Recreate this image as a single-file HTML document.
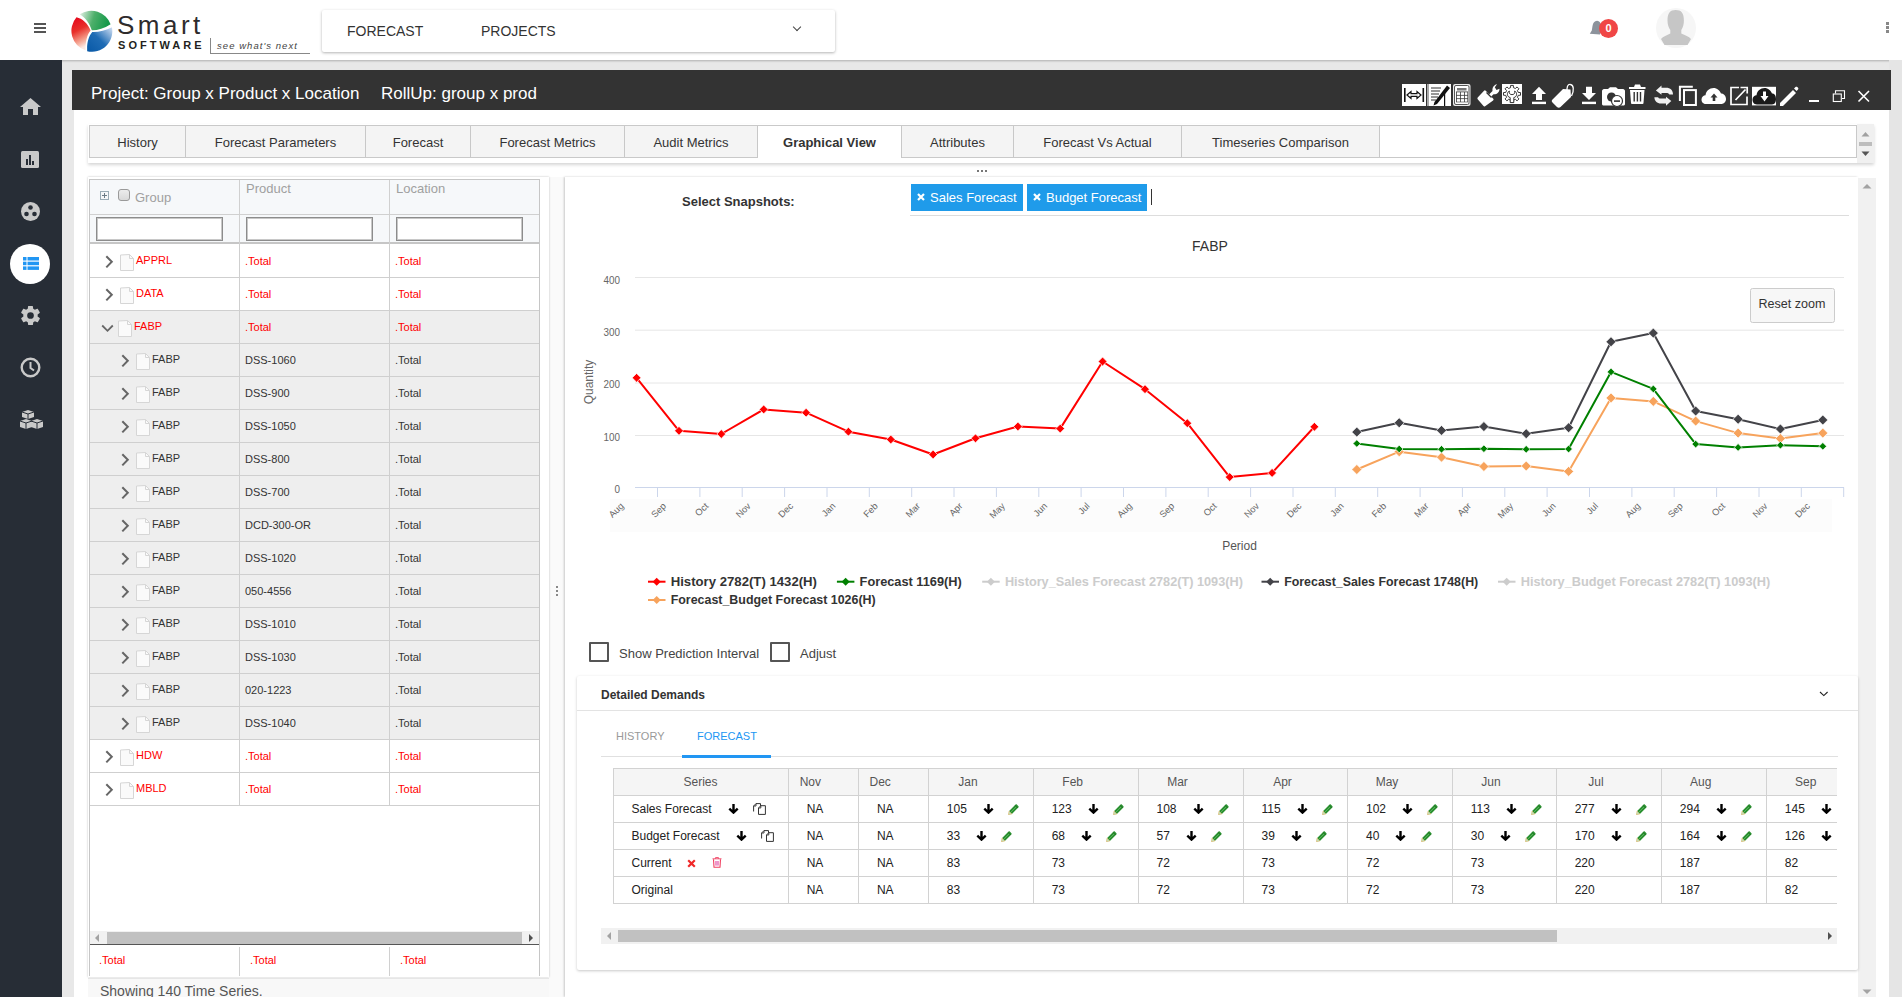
<!DOCTYPE html>
<html><head><meta charset="utf-8">
<style>
*{box-sizing:border-box;margin:0;padding:0}
html,body{width:1902px;height:997px;overflow:hidden}
body{font-family:"Liberation Sans",sans-serif;background:#e8e8e8;position:relative;color:#333}
.a{position:absolute}
#hdr{left:0;top:0;width:1902px;height:60px;background:#fff;box-shadow:0 1px 2px rgba(0,0,0,.25)}
#side{left:0;top:60px;width:62px;height:937px;background:#272d36}
#title{left:72px;top:70px;width:1819px;height:40px;background:#333}
#title span{position:absolute;top:14px;font-size:17px;color:#fff;white-space:nowrap}
#panel{left:74px;top:110px;width:1815px;height:887px;background:#fff}
#rstrip{left:1889px;top:60px;width:13px;height:937px;background:#e5e5e5}
.tabs{left:89px;top:125px;width:1768px;height:33px;border:1px solid #c9c9c9;background:#fff}
.tab{position:absolute;top:0;height:31px;background:#f4f4f4;border-right:1px solid #c8c8c8;font-size:13px;color:#333;text-align:center;line-height:33px}
.tab.act{background:#fff;font-weight:bold;height:32px}
.grid{left:89px;top:179px;width:451px;height:796px;border-left:1px solid #ccc;border-top:1px solid #ddd}
.gc{position:absolute;border-right:1px solid #ccc}
.row{position:absolute;left:0;width:450px;height:33px;border-bottom:1px solid #ccc}
.row.g{background:#eee}
.row div{position:absolute;top:0;height:32px;font-size:11px;line-height:33px;white-space:nowrap}
.red{color:#f00}
.tx{color:#333}
.chev{position:absolute;top:11px;width:8px;height:8px;border-right:2px solid #555;border-bottom:2px solid #555;transform:rotate(-45deg)}
.chev.dn{transform:rotate(45deg)}
.file{position:absolute;top:9px;width:13px;height:16px}
.sicon{position:absolute;left:19px;width:24px;height:24px}
</style></head><body>
<!-- header -->
<div id="hdr" class="a">
  <div class="a" style="left:34px;top:23px;width:12px;height:2px;background:#555"></div>
  <div class="a" style="left:34px;top:27px;width:12px;height:2px;background:#555"></div>
  <div class="a" style="left:34px;top:31px;width:12px;height:2px;background:#555"></div>
  <svg class="a" style="left:66px;top:6px" width="52" height="50" viewBox="0 0 52 50">
    <defs>
      <linearGradient id="lr" x1="0" y1="0" x2=".3" y2="1"><stop offset="0" stop-color="#e6001a"/><stop offset=".45" stop-color="#e8302a"/><stop offset=".8" stop-color="#f5a592"/><stop offset="1" stop-color="#fde8e2"/></linearGradient>
      <linearGradient id="lg" x1="0" y1="0" x2="1" y2=".2"><stop offset="0" stop-color="#e6f2e8"/><stop offset=".5" stop-color="#4daf6a"/><stop offset="1" stop-color="#14994a"/></linearGradient>
      <linearGradient id="lb" x1="0" y1="1" x2="1" y2="0"><stop offset="0" stop-color="#0858a6"/><stop offset=".5" stop-color="#1f6cb5"/><stop offset="1" stop-color="#d6e2f4"/></linearGradient>
    </defs>
    <path d="M10.5 11.3 C16 12.5 22 17.5 24.6 24.6 C21 28.5 19.5 36 19.5 44.3 A20.5 20.5 0 0 1 10.5 11.3Z" fill="url(#lr)"/>
    <path d="M13.8 8.3 A20.5 20.5 0 0 1 44.6 18.3 C38 22.5 31 24.5 25.8 24.3 C23.5 17.5 19.5 11.8 13.8 8.3Z" fill="url(#lg)"/>
    <path d="M26.3 26 C32 26.3 40 24.5 45.9 21.2 A20.5 20.5 0 0 1 21.2 45.3 C20.8 38 22 31 26.3 26Z" fill="url(#lb)"/>
  </svg>
  <div class="a" style="left:117px;top:10px;font-size:26px;letter-spacing:3.5px;color:#2e2b2c">Smart</div>
  <div class="a" style="left:118px;top:39px;font-size:11px;font-weight:bold;letter-spacing:3.05px;color:#231f20">SOFTWARE</div>
  <div class="a" style="left:210px;top:38px;width:100px;height:16px;border-left:1px solid #888;border-bottom:1px solid #888"></div>
  <div class="a" style="left:217px;top:40px;font-size:9.5px;font-style:italic;letter-spacing:1.05px;color:#444">see what's next</div>
  <div class="a" style="left:322px;top:10px;width:513px;height:42px;background:#fff;box-shadow:0 1px 3px rgba(0,0,0,.3);border-radius:2px">
    <div class="a" style="left:25px;top:13px;font-size:14px;color:#333">FORECAST</div>
    <div class="a" style="left:159px;top:13px;font-size:14px;color:#333">PROJECTS</div>
    <div class="a" style="left:472px;top:14px;width:6px;height:6px;border-right:1.5px solid #444;border-bottom:1.5px solid #444;transform:rotate(45deg)"></div>
  </div>
  <!-- bell -->
  <svg class="a" style="left:1589px;top:20px" width="14" height="16" viewBox="0 0 14 16"><path d="M8 0.8 C5.5 0.8 4 3 3.5 6 L2.8 10.5 L0.8 13.8 L11 14.5 L13 9 C13 5 11 0.8 8 0.8Z" fill="#8c939c"/></svg>
  <div class="a" style="left:1599px;top:19px;width:19px;height:19px;border-radius:50%;background:#f04646;color:#fff;font-size:11px;font-weight:bold;text-align:center;line-height:19px">0</div>
  <!-- avatar -->
  <svg class="a" style="left:1656px;top:8px" width="40" height="41" viewBox="0 0 40 41"><circle cx="20" cy="20" r="20" fill="#f6f6f6"/><path d="M11.5 12.5 C11.5 5 14 2 19.7 2 C25.4 2 27.9 5 27.9 12.5 C27.9 16.5 27 19.5 25.3 22 L25.3 25.5 C29 27 33 28.5 35 31 L31.5 37 L8.5 37 L5 31 C7 28.5 11 27 14.3 25.5 L14.3 22 C12.5 19.5 11.5 16.5 11.5 12.5Z" fill="#c6c6c6"/></svg>
  <div class="a" style="left:1886px;top:22px;width:3px;height:3px;background:#888"></div>
  <div class="a" style="left:1886px;top:26px;width:3px;height:3px;background:#888"></div>
  <div class="a" style="left:1886px;top:30px;width:3px;height:3px;background:#888"></div>
</div>

<!-- sidebar -->
<div id="side" class="a">
  <svg class="a" style="left:20px;top:38px" width="21" height="17" viewBox="0 0 21 17"><path d="M10.5 0 L21 9 L18 9 L18 17 L13 17 L13 11 L8 11 L8 17 L3 17 L3 9 L0 9Z" fill="#c9c9c9"/></svg>
  <svg class="a" style="left:21px;top:91px" width="18" height="17" viewBox="0 0 18 17"><rect x="0" y="0" width="18" height="17" rx="1.5" fill="#c9c9c9"/><rect x="5" y="8" width="2" height="6" fill="#272d36"/><rect x="8" y="4" width="2" height="10" fill="#272d36"/><rect x="11" y="10" width="2" height="4" fill="#272d36"/></svg>
  <svg class="a" style="left:21px;top:142px" width="19" height="19" viewBox="0 0 19 19"><circle cx="9.5" cy="9.5" r="9.5" fill="#c9c9c9"/><circle cx="9.5" cy="5.5" r="2.3" fill="#272d36"/><circle cx="5.5" cy="12" r="2.3" fill="#272d36"/><circle cx="13.5" cy="12" r="2.3" fill="#272d36"/></svg>
  <div class="a" style="left:10px;top:184px;width:40px;height:40px;border-radius:50%;background:#fff"></div>
  <svg class="a" style="left:23px;top:197px" width="16" height="13" viewBox="0 0 16 13"><rect x="0" y="0" width="3.5" height="3.5" fill="#2196f3"/><rect x="4.5" y="0" width="11.5" height="3.5" fill="#2196f3"/><rect x="0" y="4.7" width="3.5" height="3.5" fill="#2196f3"/><rect x="4.5" y="4.7" width="11.5" height="3.5" fill="#2196f3"/><rect x="0" y="9.4" width="3.5" height="3.5" fill="#2196f3"/><rect x="4.5" y="9.4" width="11.5" height="3.5" fill="#2196f3"/></svg>
  <svg class="a" style="left:19px;top:244px" width="23" height="23" viewBox="0 0 24 24"><path fill="#c9c9c9" d="M19.4 13c.04-.32.1-.66.1-1s-.03-.68-.07-1l2.1-1.65c.2-.15.24-.42.12-.64l-2-3.46c-.12-.22-.39-.3-.61-.22l-2.5 1c-.52-.4-1.08-.73-1.7-.98l-.37-2.65A.49.49 0 0 0 14 2h-4c-.25 0-.46.18-.5.42l-.37 2.65c-.62.25-1.18.58-1.7.98l-2.5-1c-.22-.08-.49 0-.61.22l-2 3.46c-.13.22-.07.49.12.64L4.57 11c-.04.32-.07.66-.07 1s.03.68.07 1l-2.1 1.65c-.2.15-.25.42-.12.64l2 3.46c.12.22.39.3.61.22l2.5-1c.52.4 1.08.73 1.7.98l.37 2.65c.04.24.25.42.5.42h4c.25 0 .46-.18.5-.42l.37-2.65c.62-.25 1.18-.58 1.7-.98l2.5 1c.22.08.49 0 .61-.22l2-3.46c.12-.22.07-.49-.12-.64L19.4 13zM12 15.5A3.5 3.5 0 1 1 12 8.5a3.5 3.5 0 0 1 0 7z"/></svg>
  <svg class="a" style="left:20px;top:297px" width="21" height="21" viewBox="0 0 21 21"><circle cx="10.5" cy="10.5" r="8.8" fill="none" stroke="#c9c9c9" stroke-width="2.4"/><path d="M10.5 5 L10.5 11 L14 13.5" fill="none" stroke="#c9c9c9" stroke-width="2"/></svg>
  <svg class="a" style="left:20px;top:350px" width="25" height="19" viewBox="0 0 25 19"><g fill="#c9c9c9"><path d="M8 0 L14 2 L14 7 L8 9 L2 7 L2 2Z"/><path d="M6 9 L12 11 L12 17 L6 19 L0 17 L0 11Z"/><path d="M17 9 L23 11 L23 17 L17 19 L11 17 L11 11Z"/></g><g stroke="#272d36" stroke-width="1" fill="none"><path d="M2 2 L8 4 L14 2 M8 4 L8 9"/><path d="M0 11 L6 13 L12 11 M6 13 L6 19"/><path d="M11 11 L17 13 L23 11 M17 13 L17 19"/></g></svg>
</div>

<div id="rstrip" class="a"></div>
<div id="title" class="a"><span style="left:19px">Project: Group x Product x Location</span><span style="left:309px">RollUp: group x prod</span><svg class="a" style="left:1326px;top:10px" width="480" height="30" viewBox="0 0 480 30">
 <rect x="4" y="4" width="24" height="22" fill="#fff"/>
 <rect x="6" y="8" width="1.6" height="14" fill="#111"/><rect x="24.5" y="8" width="1.6" height="14" fill="#111"/>
 <path d="M9 15 L13 11.5 L13 13.6 L19 13.6 L19 11.5 L23 15 L19 18.5 L19 16.4 L13 16.4 L13 18.5Z" fill="#fff" stroke="#111" stroke-width="1.2"/>
 <rect x="29" y="4" width="24" height="22" fill="#fff"/>
 <rect x="29.5" y="4" width="1" height="22" fill="#555"/>
 <g fill="#333"><rect x="33" y="7.5" width="10" height="1"/><rect x="33" y="10.5" width="9" height="1"/><rect x="33" y="13.5" width="8" height="1"/><rect x="33" y="16.5" width="7" height="1"/><rect x="33" y="19.5" width="5" height="1"/></g>
 <path d="M49 5.5 L52 8 L39 24 L35.5 25.5 L36.5 22Z" fill="#111"/>
 <rect x="46" y="12" width="1.2" height="14" fill="#111"/>
 <rect x="55" y="4" width="17.5" height="22" rx="2" fill="#eaeaea"/>
 <rect x="56.5" y="5.5" width="14.5" height="19" rx="1.5" fill="#fff" stroke="#555" stroke-width="1"/>
 <rect x="59" y="8" width="9.5" height="2.5" fill="#777"/>
 <rect x="58" y="11.5" width="12" height="10.8" fill="#3a3a3a"/><g fill="#fff"><rect x="58.8" y="12.3" width="3.2" height="2.6"/><rect x="62.8" y="12.3" width="3.2" height="2.6"/><rect x="66.8" y="12.3" width="2.6" height="2.6"/><rect x="58.8" y="15.7" width="3.2" height="2.6"/><rect x="62.8" y="15.7" width="3.2" height="2.6"/><rect x="66.8" y="15.7" width="2.6" height="2.6"/><rect x="58.8" y="19.1" width="3.2" height="2.6"/><rect x="62.8" y="19.1" width="3.2" height="2.6"/><rect x="66.8" y="19.1" width="2.6" height="2.6"/></g>
 <path d="M80.6 18.4 L86.9 11.6 L94.4 19.5 L86.4 25.3Z" fill="#fff" stroke="#fff" stroke-width="2.4" stroke-linejoin="round"/><path d="M91 14.5 L94.5 11 C94 8 95.5 5 99 4.3 L96.8 7.3 L98.5 10 L101.5 8.8 C101.5 12.5 99 14.5 95.5 14.3 L92.5 17.2Z" fill="#fff"/><path d="M88.5 12.5 L93.5 17.5" stroke="#333" stroke-width="1.3"/>
 <rect x="104" y="4" width="20" height="20" fill="#fff"/>
 <path d="M112.56 7.66 L112.65 5.41 L115.35 5.41 L115.44 7.66 L117.39 8.47 L119.05 6.94 L120.96 8.85 L119.43 10.51 L120.24 12.46 L122.49 12.55 L122.49 15.25 L120.24 15.34 L119.43 17.29 L120.96 18.95 L119.05 20.86 L117.39 19.33 L115.44 20.14 L115.35 22.39 L112.65 22.39 L112.56 20.14 L110.61 19.33 L108.95 20.86 L107.04 18.95 L108.57 17.29 L107.76 15.34 L105.51 15.25 L105.51 12.55 L107.76 12.46 L108.57 10.51 L107.04 8.85 L108.95 6.94 L110.61 8.47Z" fill="none" stroke="#222" stroke-width="0.9" stroke-linejoin="round"/><path d="M111.3 11 L111.3 12.6 C111.3 13.8 112.4 14.6 114 14.6 C115.6 14.6 116.7 13.8 116.7 12.6 L116.7 11 C118 11.7 118.6 13 118.6 14.3 C118.6 16 117.4 17.2 115.8 17.6 L115.8 22.6 L112.2 22.6 L112.2 17.6 C110.6 17.2 109.4 16 109.4 14.3 C109.4 13 110 11.7 111.3 11Z" fill="#fff" stroke="#222" stroke-width="0.9" stroke-linejoin="round"/>
 <path d="M134 14 L141 6.8 L148 14 L144 14 L144 20 L138 20 L138 14Z" fill="#fff"/><rect x="134" y="21.7" width="14" height="2.4" fill="#fff"/>
 <path d="M154.5 19.5 L165 9 L172.5 9.5 L173 17 L162.5 27 C161.5 28 160 28 159 27 L154.5 22.5 C153.5 21.5 153.5 20.5 154.5 19.5Z" fill="#fff"/>
 <path d="M169.5 12.5 C168 7 170 4 172.5 4.5 C175.5 5 176.5 10 173.5 16" fill="none" stroke="#fff" stroke-width="1.3"/>
 <path d="M184 13 L188 13 L188 6.8 L194 6.8 L194 13 L198 13 L191 20Z" fill="#fff"/><rect x="184" y="21.7" width="14" height="2.4" fill="#fff"/>
 <path d="M204 11 C204 10 205 9 206 9 L210 9 L212 7.2 L218 7.2 L220 9 L225 9 C226 9 227 10 227 11 L227 24 C227 25 226 25.5 225 25.5 L206 25.5 C205 25.5 204 25 204 24Z" fill="#fff"/>
 <circle cx="213.5" cy="17" r="4.5" fill="#333"/>
 <circle cx="219" cy="21" r="5.5" fill="#fff" stroke="#333" stroke-width="1.2"/><rect x="216" y="20.3" width="6" height="1.6" fill="#333"/>
 <path d="M231 7 L236 7 L237 4.5 L242 4.5 L243 7 L247.5 7 L247.5 9 L231 9Z" fill="#fff"/>
 <path d="M232 10 L246.5 10 L245.5 23 C245.5 23.8 245 24 244 24 L234.5 24 C233.5 24 233 23.8 233 23Z" fill="#fff"/>
 <g fill="#333"><rect x="235.5" y="12" width="1.4" height="9.5"/><rect x="238.7" y="12" width="1.4" height="9.5"/><rect x="241.8" y="12" width="1.4" height="9.5"/></g>
 <path d="M257.9 10.5 L263.5 5.6 L263.5 7.8 L268 7.8 C272.5 7.8 275 10.5 275 14.6 L271.3 14.6 C271.3 13.5 270 13 268 13 L263.5 13 L263.5 14.8Z" fill="#f2f2f2"/>
 <path d="M273.3 21.1 L268 16.8 L268 18.6 L263 18.6 C261.2 18.6 260.2 17.9 260.2 17.3 L256.4 17.3 C256.4 21 259 23.6 263 23.6 L268 23.6 L268 25.8Z" fill="#f0f0f0"/>
 <path d="M281.9 21 L281.9 6.8 L294.8 6.8" fill="none" stroke="#fff" stroke-width="2"/>
 <rect x="286" y="10.1" width="11.9" height="14.9" fill="none" stroke="#fff" stroke-width="2"/>
 <path d="M308 24 C304.5 24 303.5 21.5 303.5 19.5 C303.5 17 305.5 15.3 307.5 15.2 C308 11 311.5 8 315.5 8 C319 8 322 10.5 323 13.5 C326 13.5 328 16 328 19 C328 21.7 326 24 323 24Z" fill="#fff"/>
 <path d="M312.5 17.5 L316 13.5 L319.5 17.5 L317.3 17.5 L317.3 21 L314.7 21 L314.7 17.5Z" fill="#333"/>
 <path d="M341 7.5 L333 7.5 L333 24.5 L349 24.5 L349 16.5" fill="none" stroke="#fff" stroke-width="1.7"/>
 <path d="M337.5 20 L347.5 9.5 M342.5 7.5 L349.2 7.5 L349.2 13.5" fill="none" stroke="#fff" stroke-width="1.7"/>
 <rect x="354" y="6.8" width="24" height="18.6" fill="#fff"/>
 <path d="M359 24.5 C355.5 24.5 354.5 21.5 354.5 19.5 C354.5 17 356.5 15.3 358.5 15.2 C359 11 362.5 8 366.5 8 C370 8 373 10.5 374 13.5 C377 13.5 378 16 378 19 C378 21.7 377 24.5 374 24.5Z" fill="#1a1a1a"/>
 <path d="M362.5 16 L365 16 L365 11.5 L368 11.5 L368 16 L370.5 16 L366.5 21.5Z" fill="#fff"/>
 <path d="M382 23 L395 10 L398 13 L385 26 L382 26Z" fill="#fff"/><path d="M396 8.5 L397.5 7 C398 6.5 398.8 6.5 399.3 7 L400 7.8 C400.5 8.3 400.5 9 400 9.5 L398.6 11Z" fill="#fff"/>
 <rect x="411" y="20" width="10" height="2" fill="#fff"/>
 <rect x="435.3" y="14" width="8" height="7.5" fill="none" stroke="#fff" stroke-width="1.1"/>
 <path d="M437.5 13.5 L437.5 10.8 L446.5 10.8 L446.5 18.5 L444 18.5" fill="none" stroke="#fff" stroke-width="1.1"/>
 <path d="M460.5 11 L471 21.5 M471 11 L460.5 21.5" stroke="#fff" stroke-width="1.6"/>
</svg>
</div>
<div id="panel" class="a"></div>
<div class="a" style="left:549px;top:177px;width:16px;height:820px;background:#fafafa"></div>

<div class="a" style="left:88px;top:177px;width:461px;height:800px;background:#fff;box-shadow:0 0 2px rgba(0,0,0,.25)"></div>
<div class="a" style="left:88px;top:978px;width:461px;height:19px;background:#f8f8f8;border-top:1px solid #e6e6e6"><div class="a" style="left:12px;top:4px;font-size:14px;color:#555">Showing 140 Time Series.</div></div>
<div class="a grid" style="left:89px;top:179px;width:451px;height:797px;border:1px solid #c6c6c6;border-bottom:none;background:#fff">
<div class="a" style="left:0;top:0;width:449px;height:64px;background:#f6f8fa;border-bottom:2px solid #c6c6c6"></div>
<div class="a" style="left:0;top:34px;width:449px;height:1px;background:#d0d0d0"></div>
<div class="a" style="left:10px;top:11px;width:9px;height:9px;border:1px solid #9aabb5;background:#f4f6f8"><div class="a" style="left:1px;top:3px;width:5px;height:1px;background:#6a7a85"></div><div class="a" style="left:3px;top:1px;width:1px;height:5px;background:#6a7a85"></div></div>
<div class="a" style="left:28px;top:9px;width:12px;height:12px;border:1px solid #9a9a9a;border-radius:3px;background:linear-gradient(#ececec,#d9d9d9)"></div>
<div class="a" style="left:45px;top:10px;font-size:13px;color:#a0a0a0">Group</div>
<div class="a" style="left:156px;top:1px;font-size:13px;color:#a0a0a0">Product</div>
<div class="a" style="left:306px;top:1px;font-size:13px;color:#a0a0a0">Location</div>
<div class="a" style="left:6px;top:37px;width:127px;height:24px;border:1px solid #8c8c8c;background:#fff;box-shadow:inset 0 0 0 1px #c8c8c8"></div>
<div class="a" style="left:156px;top:37px;width:127px;height:24px;border:1px solid #8c8c8c;background:#fff;box-shadow:inset 0 0 0 1px #c8c8c8"></div>
<div class="a" style="left:306px;top:37px;width:127px;height:24px;border:1px solid #8c8c8c;background:#fff;box-shadow:inset 0 0 0 1px #c8c8c8"></div>
<div class="a" style="left:149px;top:0;width:1px;height:626px;background:#d0d0d0"></div>
<div class="a" style="left:299px;top:0;width:1px;height:626px;background:#d0d0d0"></div>
<div class="a" style="left:0;top:65px;width:449px;height:33px;background:#fff;border-bottom:1px solid #cfcfcf">
<svg class="a" style="left:15px;top:10px" width="9" height="14" viewBox="0 0 9 14"><path d="M1.3 1.2 L6.8 6.8 L1.3 12.4" fill="none" stroke="#666" stroke-width="2"/></svg>
<svg class="a" style="left:30px;top:9px" width="14" height="17" viewBox="0 0 14 17"><path d="M0.5 1 L9.5 0.5 L13.5 4.5 L13.5 16.5 L0.5 16.5Z" fill="#fafafa" stroke="#d6d6d6" stroke-width="1"/><path d="M9.5 0.5 L9.5 4.5 L13.5 4.5" fill="none" stroke="#d6d6d6"/></svg>
<div class="a" style="left:46px;top:-1px;font-size:11px;line-height:32px;color:#f00">APPRL</div>
<div class="a" style="left:155px;top:0px;font-size:11px;line-height:32px;color:#f00">.Total</div>
<div class="a" style="left:305px;top:0px;font-size:11px;line-height:32px;color:#f00">.Total</div>
</div>
<div class="a" style="left:0;top:98px;width:449px;height:33px;background:#fff;border-bottom:1px solid #cfcfcf">
<svg class="a" style="left:15px;top:10px" width="9" height="14" viewBox="0 0 9 14"><path d="M1.3 1.2 L6.8 6.8 L1.3 12.4" fill="none" stroke="#666" stroke-width="2"/></svg>
<svg class="a" style="left:30px;top:9px" width="14" height="17" viewBox="0 0 14 17"><path d="M0.5 1 L9.5 0.5 L13.5 4.5 L13.5 16.5 L0.5 16.5Z" fill="#fafafa" stroke="#d6d6d6" stroke-width="1"/><path d="M9.5 0.5 L9.5 4.5 L13.5 4.5" fill="none" stroke="#d6d6d6"/></svg>
<div class="a" style="left:46px;top:-1px;font-size:11px;line-height:32px;color:#f00">DATA</div>
<div class="a" style="left:155px;top:0px;font-size:11px;line-height:32px;color:#f00">.Total</div>
<div class="a" style="left:305px;top:0px;font-size:11px;line-height:32px;color:#f00">.Total</div>
</div>
<div class="a" style="left:0;top:131px;width:449px;height:33px;background:#eee;border-bottom:1px solid #cfcfcf">
<svg class="a" style="left:11px;top:13px" width="13" height="9" viewBox="0 0 13 9"><path d="M1.2 1.5 L6.5 6.8 L11.8 1.5" fill="none" stroke="#666" stroke-width="1.8"/></svg>
<svg class="a" style="left:28px;top:9px" width="14" height="17" viewBox="0 0 14 17"><path d="M0.5 1 L9.5 0.5 L13.5 4.5 L13.5 16.5 L0.5 16.5Z" fill="#fafafa" stroke="#d6d6d6" stroke-width="1"/><path d="M9.5 0.5 L9.5 4.5 L13.5 4.5" fill="none" stroke="#d6d6d6"/></svg>
<div class="a" style="left:44px;top:-1px;font-size:11px;line-height:32px;color:#f00">FABP</div>
<div class="a" style="left:155px;top:0px;font-size:11px;line-height:32px;color:#f00">.Total</div>
<div class="a" style="left:305px;top:0px;font-size:11px;line-height:32px;color:#f00">.Total</div>
</div>
<div class="a" style="left:0;top:164px;width:449px;height:33px;background:#eee;border-bottom:1px solid #cfcfcf">
<svg class="a" style="left:31px;top:10px" width="9" height="14" viewBox="0 0 9 14"><path d="M1.3 1.2 L6.8 6.8 L1.3 12.4" fill="none" stroke="#666" stroke-width="2"/></svg>
<svg class="a" style="left:46px;top:9px" width="14" height="17" viewBox="0 0 14 17"><path d="M0.5 1 L9.5 0.5 L13.5 4.5 L13.5 16.5 L0.5 16.5Z" fill="#fafafa" stroke="#d6d6d6" stroke-width="1"/><path d="M9.5 0.5 L9.5 4.5 L13.5 4.5" fill="none" stroke="#d6d6d6"/></svg>
<div class="a" style="left:62px;top:-1px;font-size:11px;line-height:32px;color:#333">FABP</div>
<div class="a" style="left:155px;top:0px;font-size:11px;line-height:32px;color:#333">DSS-1060</div>
<div class="a" style="left:305px;top:0px;font-size:11px;line-height:32px;color:#333">.Total</div>
</div>
<div class="a" style="left:0;top:197px;width:449px;height:33px;background:#eee;border-bottom:1px solid #cfcfcf">
<svg class="a" style="left:31px;top:10px" width="9" height="14" viewBox="0 0 9 14"><path d="M1.3 1.2 L6.8 6.8 L1.3 12.4" fill="none" stroke="#666" stroke-width="2"/></svg>
<svg class="a" style="left:46px;top:9px" width="14" height="17" viewBox="0 0 14 17"><path d="M0.5 1 L9.5 0.5 L13.5 4.5 L13.5 16.5 L0.5 16.5Z" fill="#fafafa" stroke="#d6d6d6" stroke-width="1"/><path d="M9.5 0.5 L9.5 4.5 L13.5 4.5" fill="none" stroke="#d6d6d6"/></svg>
<div class="a" style="left:62px;top:-1px;font-size:11px;line-height:32px;color:#333">FABP</div>
<div class="a" style="left:155px;top:0px;font-size:11px;line-height:32px;color:#333">DSS-900</div>
<div class="a" style="left:305px;top:0px;font-size:11px;line-height:32px;color:#333">.Total</div>
</div>
<div class="a" style="left:0;top:230px;width:449px;height:33px;background:#eee;border-bottom:1px solid #cfcfcf">
<svg class="a" style="left:31px;top:10px" width="9" height="14" viewBox="0 0 9 14"><path d="M1.3 1.2 L6.8 6.8 L1.3 12.4" fill="none" stroke="#666" stroke-width="2"/></svg>
<svg class="a" style="left:46px;top:9px" width="14" height="17" viewBox="0 0 14 17"><path d="M0.5 1 L9.5 0.5 L13.5 4.5 L13.5 16.5 L0.5 16.5Z" fill="#fafafa" stroke="#d6d6d6" stroke-width="1"/><path d="M9.5 0.5 L9.5 4.5 L13.5 4.5" fill="none" stroke="#d6d6d6"/></svg>
<div class="a" style="left:62px;top:-1px;font-size:11px;line-height:32px;color:#333">FABP</div>
<div class="a" style="left:155px;top:0px;font-size:11px;line-height:32px;color:#333">DSS-1050</div>
<div class="a" style="left:305px;top:0px;font-size:11px;line-height:32px;color:#333">.Total</div>
</div>
<div class="a" style="left:0;top:263px;width:449px;height:33px;background:#eee;border-bottom:1px solid #cfcfcf">
<svg class="a" style="left:31px;top:10px" width="9" height="14" viewBox="0 0 9 14"><path d="M1.3 1.2 L6.8 6.8 L1.3 12.4" fill="none" stroke="#666" stroke-width="2"/></svg>
<svg class="a" style="left:46px;top:9px" width="14" height="17" viewBox="0 0 14 17"><path d="M0.5 1 L9.5 0.5 L13.5 4.5 L13.5 16.5 L0.5 16.5Z" fill="#fafafa" stroke="#d6d6d6" stroke-width="1"/><path d="M9.5 0.5 L9.5 4.5 L13.5 4.5" fill="none" stroke="#d6d6d6"/></svg>
<div class="a" style="left:62px;top:-1px;font-size:11px;line-height:32px;color:#333">FABP</div>
<div class="a" style="left:155px;top:0px;font-size:11px;line-height:32px;color:#333">DSS-800</div>
<div class="a" style="left:305px;top:0px;font-size:11px;line-height:32px;color:#333">.Total</div>
</div>
<div class="a" style="left:0;top:296px;width:449px;height:33px;background:#eee;border-bottom:1px solid #cfcfcf">
<svg class="a" style="left:31px;top:10px" width="9" height="14" viewBox="0 0 9 14"><path d="M1.3 1.2 L6.8 6.8 L1.3 12.4" fill="none" stroke="#666" stroke-width="2"/></svg>
<svg class="a" style="left:46px;top:9px" width="14" height="17" viewBox="0 0 14 17"><path d="M0.5 1 L9.5 0.5 L13.5 4.5 L13.5 16.5 L0.5 16.5Z" fill="#fafafa" stroke="#d6d6d6" stroke-width="1"/><path d="M9.5 0.5 L9.5 4.5 L13.5 4.5" fill="none" stroke="#d6d6d6"/></svg>
<div class="a" style="left:62px;top:-1px;font-size:11px;line-height:32px;color:#333">FABP</div>
<div class="a" style="left:155px;top:0px;font-size:11px;line-height:32px;color:#333">DSS-700</div>
<div class="a" style="left:305px;top:0px;font-size:11px;line-height:32px;color:#333">.Total</div>
</div>
<div class="a" style="left:0;top:329px;width:449px;height:33px;background:#eee;border-bottom:1px solid #cfcfcf">
<svg class="a" style="left:31px;top:10px" width="9" height="14" viewBox="0 0 9 14"><path d="M1.3 1.2 L6.8 6.8 L1.3 12.4" fill="none" stroke="#666" stroke-width="2"/></svg>
<svg class="a" style="left:46px;top:9px" width="14" height="17" viewBox="0 0 14 17"><path d="M0.5 1 L9.5 0.5 L13.5 4.5 L13.5 16.5 L0.5 16.5Z" fill="#fafafa" stroke="#d6d6d6" stroke-width="1"/><path d="M9.5 0.5 L9.5 4.5 L13.5 4.5" fill="none" stroke="#d6d6d6"/></svg>
<div class="a" style="left:62px;top:-1px;font-size:11px;line-height:32px;color:#333">FABP</div>
<div class="a" style="left:155px;top:0px;font-size:11px;line-height:32px;color:#333">DCD-300-OR</div>
<div class="a" style="left:305px;top:0px;font-size:11px;line-height:32px;color:#333">.Total</div>
</div>
<div class="a" style="left:0;top:362px;width:449px;height:33px;background:#eee;border-bottom:1px solid #cfcfcf">
<svg class="a" style="left:31px;top:10px" width="9" height="14" viewBox="0 0 9 14"><path d="M1.3 1.2 L6.8 6.8 L1.3 12.4" fill="none" stroke="#666" stroke-width="2"/></svg>
<svg class="a" style="left:46px;top:9px" width="14" height="17" viewBox="0 0 14 17"><path d="M0.5 1 L9.5 0.5 L13.5 4.5 L13.5 16.5 L0.5 16.5Z" fill="#fafafa" stroke="#d6d6d6" stroke-width="1"/><path d="M9.5 0.5 L9.5 4.5 L13.5 4.5" fill="none" stroke="#d6d6d6"/></svg>
<div class="a" style="left:62px;top:-1px;font-size:11px;line-height:32px;color:#333">FABP</div>
<div class="a" style="left:155px;top:0px;font-size:11px;line-height:32px;color:#333">DSS-1020</div>
<div class="a" style="left:305px;top:0px;font-size:11px;line-height:32px;color:#333">.Total</div>
</div>
<div class="a" style="left:0;top:395px;width:449px;height:33px;background:#eee;border-bottom:1px solid #cfcfcf">
<svg class="a" style="left:31px;top:10px" width="9" height="14" viewBox="0 0 9 14"><path d="M1.3 1.2 L6.8 6.8 L1.3 12.4" fill="none" stroke="#666" stroke-width="2"/></svg>
<svg class="a" style="left:46px;top:9px" width="14" height="17" viewBox="0 0 14 17"><path d="M0.5 1 L9.5 0.5 L13.5 4.5 L13.5 16.5 L0.5 16.5Z" fill="#fafafa" stroke="#d6d6d6" stroke-width="1"/><path d="M9.5 0.5 L9.5 4.5 L13.5 4.5" fill="none" stroke="#d6d6d6"/></svg>
<div class="a" style="left:62px;top:-1px;font-size:11px;line-height:32px;color:#333">FABP</div>
<div class="a" style="left:155px;top:0px;font-size:11px;line-height:32px;color:#333">050-4556</div>
<div class="a" style="left:305px;top:0px;font-size:11px;line-height:32px;color:#333">.Total</div>
</div>
<div class="a" style="left:0;top:428px;width:449px;height:33px;background:#eee;border-bottom:1px solid #cfcfcf">
<svg class="a" style="left:31px;top:10px" width="9" height="14" viewBox="0 0 9 14"><path d="M1.3 1.2 L6.8 6.8 L1.3 12.4" fill="none" stroke="#666" stroke-width="2"/></svg>
<svg class="a" style="left:46px;top:9px" width="14" height="17" viewBox="0 0 14 17"><path d="M0.5 1 L9.5 0.5 L13.5 4.5 L13.5 16.5 L0.5 16.5Z" fill="#fafafa" stroke="#d6d6d6" stroke-width="1"/><path d="M9.5 0.5 L9.5 4.5 L13.5 4.5" fill="none" stroke="#d6d6d6"/></svg>
<div class="a" style="left:62px;top:-1px;font-size:11px;line-height:32px;color:#333">FABP</div>
<div class="a" style="left:155px;top:0px;font-size:11px;line-height:32px;color:#333">DSS-1010</div>
<div class="a" style="left:305px;top:0px;font-size:11px;line-height:32px;color:#333">.Total</div>
</div>
<div class="a" style="left:0;top:461px;width:449px;height:33px;background:#eee;border-bottom:1px solid #cfcfcf">
<svg class="a" style="left:31px;top:10px" width="9" height="14" viewBox="0 0 9 14"><path d="M1.3 1.2 L6.8 6.8 L1.3 12.4" fill="none" stroke="#666" stroke-width="2"/></svg>
<svg class="a" style="left:46px;top:9px" width="14" height="17" viewBox="0 0 14 17"><path d="M0.5 1 L9.5 0.5 L13.5 4.5 L13.5 16.5 L0.5 16.5Z" fill="#fafafa" stroke="#d6d6d6" stroke-width="1"/><path d="M9.5 0.5 L9.5 4.5 L13.5 4.5" fill="none" stroke="#d6d6d6"/></svg>
<div class="a" style="left:62px;top:-1px;font-size:11px;line-height:32px;color:#333">FABP</div>
<div class="a" style="left:155px;top:0px;font-size:11px;line-height:32px;color:#333">DSS-1030</div>
<div class="a" style="left:305px;top:0px;font-size:11px;line-height:32px;color:#333">.Total</div>
</div>
<div class="a" style="left:0;top:494px;width:449px;height:33px;background:#eee;border-bottom:1px solid #cfcfcf">
<svg class="a" style="left:31px;top:10px" width="9" height="14" viewBox="0 0 9 14"><path d="M1.3 1.2 L6.8 6.8 L1.3 12.4" fill="none" stroke="#666" stroke-width="2"/></svg>
<svg class="a" style="left:46px;top:9px" width="14" height="17" viewBox="0 0 14 17"><path d="M0.5 1 L9.5 0.5 L13.5 4.5 L13.5 16.5 L0.5 16.5Z" fill="#fafafa" stroke="#d6d6d6" stroke-width="1"/><path d="M9.5 0.5 L9.5 4.5 L13.5 4.5" fill="none" stroke="#d6d6d6"/></svg>
<div class="a" style="left:62px;top:-1px;font-size:11px;line-height:32px;color:#333">FABP</div>
<div class="a" style="left:155px;top:0px;font-size:11px;line-height:32px;color:#333">020-1223</div>
<div class="a" style="left:305px;top:0px;font-size:11px;line-height:32px;color:#333">.Total</div>
</div>
<div class="a" style="left:0;top:527px;width:449px;height:33px;background:#eee;border-bottom:1px solid #cfcfcf">
<svg class="a" style="left:31px;top:10px" width="9" height="14" viewBox="0 0 9 14"><path d="M1.3 1.2 L6.8 6.8 L1.3 12.4" fill="none" stroke="#666" stroke-width="2"/></svg>
<svg class="a" style="left:46px;top:9px" width="14" height="17" viewBox="0 0 14 17"><path d="M0.5 1 L9.5 0.5 L13.5 4.5 L13.5 16.5 L0.5 16.5Z" fill="#fafafa" stroke="#d6d6d6" stroke-width="1"/><path d="M9.5 0.5 L9.5 4.5 L13.5 4.5" fill="none" stroke="#d6d6d6"/></svg>
<div class="a" style="left:62px;top:-1px;font-size:11px;line-height:32px;color:#333">FABP</div>
<div class="a" style="left:155px;top:0px;font-size:11px;line-height:32px;color:#333">DSS-1040</div>
<div class="a" style="left:305px;top:0px;font-size:11px;line-height:32px;color:#333">.Total</div>
</div>
<div class="a" style="left:0;top:560px;width:449px;height:33px;background:#fff;border-bottom:1px solid #cfcfcf">
<svg class="a" style="left:15px;top:10px" width="9" height="14" viewBox="0 0 9 14"><path d="M1.3 1.2 L6.8 6.8 L1.3 12.4" fill="none" stroke="#666" stroke-width="2"/></svg>
<svg class="a" style="left:30px;top:9px" width="14" height="17" viewBox="0 0 14 17"><path d="M0.5 1 L9.5 0.5 L13.5 4.5 L13.5 16.5 L0.5 16.5Z" fill="#fafafa" stroke="#d6d6d6" stroke-width="1"/><path d="M9.5 0.5 L9.5 4.5 L13.5 4.5" fill="none" stroke="#d6d6d6"/></svg>
<div class="a" style="left:46px;top:-1px;font-size:11px;line-height:32px;color:#f00">HDW</div>
<div class="a" style="left:155px;top:0px;font-size:11px;line-height:32px;color:#f00">.Total</div>
<div class="a" style="left:305px;top:0px;font-size:11px;line-height:32px;color:#f00">.Total</div>
</div>
<div class="a" style="left:0;top:593px;width:449px;height:33px;background:#fff;border-bottom:1px solid #cfcfcf">
<svg class="a" style="left:15px;top:10px" width="9" height="14" viewBox="0 0 9 14"><path d="M1.3 1.2 L6.8 6.8 L1.3 12.4" fill="none" stroke="#666" stroke-width="2"/></svg>
<svg class="a" style="left:30px;top:9px" width="14" height="17" viewBox="0 0 14 17"><path d="M0.5 1 L9.5 0.5 L13.5 4.5 L13.5 16.5 L0.5 16.5Z" fill="#fafafa" stroke="#d6d6d6" stroke-width="1"/><path d="M9.5 0.5 L9.5 4.5 L13.5 4.5" fill="none" stroke="#d6d6d6"/></svg>
<div class="a" style="left:46px;top:-1px;font-size:11px;line-height:32px;color:#f00">MBLD</div>
<div class="a" style="left:155px;top:0px;font-size:11px;line-height:32px;color:#f00">.Total</div>
<div class="a" style="left:305px;top:0px;font-size:11px;line-height:32px;color:#f00">.Total</div>
</div>
<div class="a" style="left:149px;top:65px;width:1px;height:561px;background:#cfcfcf"></div><div class="a" style="left:299px;top:65px;width:1px;height:561px;background:#cfcfcf"></div>
<div class="a" style="left:0;top:751px;width:449px;height:14px;background:#f1f1f1"></div>
<div class="a" style="left:17px;top:752px;width:415px;height:12px;background:#c1c1c1"></div>
<svg class="a" style="left:4px;top:754px" width="6" height="8"><path d="M5 0 L1 4 L5 8Z" fill="#a3a3a3"/></svg>
<svg class="a" style="left:438px;top:754px" width="6" height="8"><path d="M1 0 L5 4 L1 8Z" fill="#505050"/></svg>
<div class="a" style="left:0;top:764px;width:449px;height:32px;background:#fff;border-top:1px solid #555"></div>
<div class="a" style="left:149px;top:767px;width:1px;height:29px;background:#d0d0d0"></div>
<div class="a" style="left:299px;top:767px;width:1px;height:29px;background:#d0d0d0"></div>
<div class="a" style="left:9px;top:765px;font-size:11px;line-height:30px;color:#f00">.Total</div>
<div class="a" style="left:160px;top:765px;font-size:11px;line-height:30px;color:#f00">.Total</div>
<div class="a" style="left:310px;top:765px;font-size:11px;line-height:30px;color:#f00">.Total</div>
</div>
<!-- right panel -->
<div class="a" style="left:565px;top:177px;width:1293px;height:820px;background:#fff;box-shadow:-1px 0 2px rgba(0,0,0,.2)"></div>
<div class="a" style="left:1858px;top:178px;width:18px;height:819px;background:#f1f1f1"></div>
<svg class="a" style="left:1862px;top:182px" width="10" height="8"><path d="M0.5 6.5 L5 2 L9.5 6.5Z" fill="#a3a3a3"/></svg>
<svg class="a" style="left:1862px;top:988px" width="10" height="8"><path d="M0.5 1.5 L5 6 L9.5 1.5Z" fill="#a3a3a3"/></svg>
<div class="a" style="left:977px;top:170px;font-size:0"><span style="display:inline-block;width:2px;height:2px;background:#777;margin-right:2px"></span><span style="display:inline-block;width:2px;height:2px;background:#777;margin-right:2px"></span><span style="display:inline-block;width:2px;height:2px;background:#777"></span></div>
<div class="a" style="left:556px;top:586px;width:2px;height:2px;background:#888"></div>
<div class="a" style="left:556px;top:590px;width:2px;height:2px;background:#888"></div>
<div class="a" style="left:556px;top:594px;width:2px;height:2px;background:#888"></div>
<div class="a" style="left:682px;top:194px;font-size:13px;font-weight:bold;color:#333">Select Snapshots:</div>
<div class="a" style="left:910px;top:215px;width:939px;height:1px;background:#ddd"></div>
<div class="a" style="left:911px;top:184px;width:112px;height:27px;background:#1f9bea"></div>
<div class="a" style="left:1027px;top:184px;width:120px;height:27px;background:#1f9bea"></div>
<svg class="a" style="left:917px;top:193px" width="8" height="8"><path d="M1 1 L7 7 M7 1 L1 7" stroke="#fff" stroke-width="2.2"/></svg>
<svg class="a" style="left:1033px;top:193px" width="8" height="8"><path d="M1 1 L7 7 M7 1 L1 7" stroke="#fff" stroke-width="2.2"/></svg>
<div class="a" style="left:930px;top:190px;font-size:13px;color:#fff">Sales Forecast</div>
<div class="a" style="left:1046px;top:190px;font-size:13px;color:#fff">Budget Forecast</div>
<div class="a" style="left:1151px;top:189px;width:1px;height:16px;background:#333"></div>
<svg class="a" style="left:566px;top:220px" width="1290" height="400" viewBox="566 220 1290 400" font-family="Liberation Sans, sans-serif">
<rect x="610" y="499" width="1222" height="33" fill="#fcfcfc"/>
<text x="1210" y="251" text-anchor="middle" font-size="14" fill="#333">FABP</text>
<path d="M635 277.5 H1844" stroke="#e6e6e6" stroke-width="1"/>
<path d="M635 330.2 H1844" stroke="#e6e6e6" stroke-width="1"/>
<path d="M635 383.0 H1844" stroke="#e6e6e6" stroke-width="1"/>
<path d="M635 435.5 H1844" stroke="#e6e6e6" stroke-width="1"/>
<text x="620" y="283.8" text-anchor="end" font-size="11" fill="#666" textLength="16.5" lengthAdjust="spacingAndGlyphs">400</text>
<text x="620" y="336.1" text-anchor="end" font-size="11" fill="#666" textLength="16.5" lengthAdjust="spacingAndGlyphs">300</text>
<text x="620" y="388.3" text-anchor="end" font-size="11" fill="#666" textLength="16.5" lengthAdjust="spacingAndGlyphs">200</text>
<text x="620" y="440.5" text-anchor="end" font-size="11" fill="#666" textLength="16.5" lengthAdjust="spacingAndGlyphs">100</text>
<text x="620" y="492.6" text-anchor="end" font-size="11" fill="#666" textLength="5.5" lengthAdjust="spacingAndGlyphs">0</text>
<text transform="translate(593,382) rotate(-90)" text-anchor="middle" font-size="12" fill="#666">Quantity</text>
<path d="M635 487.5 H1844" stroke="#ccd6eb" stroke-width="1"/>
<path d="M657.5 487.5 V497M699.9 487.5 V497M742.2 487.5 V497M784.6 487.5 V497M827.0 487.5 V497M869.3 487.5 V497M911.7 487.5 V497M954.0 487.5 V497M996.4 487.5 V497M1038.8 487.5 V497M1081.1 487.5 V497M1123.5 487.5 V497M1165.9 487.5 V497M1208.2 487.5 V497M1250.6 487.5 V497M1293.0 487.5 V497M1335.3 487.5 V497M1377.7 487.5 V497M1420.1 487.5 V497M1462.4 487.5 V497M1504.8 487.5 V497M1547.1 487.5 V497M1589.5 487.5 V497M1631.9 487.5 V497M1674.2 487.5 V497M1716.6 487.5 V497M1759.0 487.5 V497M1801.3 487.5 V497M1843.7 487.5 V497" stroke="#ccd6eb" stroke-width="1"/>
<text transform="translate(624.3,506.6) rotate(-45)" text-anchor="end" font-size="9.3" fill="#666">Aug</text>
<text transform="translate(666.7,506.6) rotate(-45)" text-anchor="end" font-size="9.3" fill="#666">Sep</text>
<text transform="translate(709.0,506.6) rotate(-45)" text-anchor="end" font-size="9.3" fill="#666">Oct</text>
<text transform="translate(751.4,506.6) rotate(-45)" text-anchor="end" font-size="9.3" fill="#666">Nov</text>
<text transform="translate(793.8,506.6) rotate(-45)" text-anchor="end" font-size="9.3" fill="#666">Dec</text>
<text transform="translate(836.1,506.6) rotate(-45)" text-anchor="end" font-size="9.3" fill="#666">Jan</text>
<text transform="translate(878.5,506.6) rotate(-45)" text-anchor="end" font-size="9.3" fill="#666">Feb</text>
<text transform="translate(920.8,506.6) rotate(-45)" text-anchor="end" font-size="9.3" fill="#666">Mar</text>
<text transform="translate(963.2,506.6) rotate(-45)" text-anchor="end" font-size="9.3" fill="#666">Apr</text>
<text transform="translate(1005.6,506.6) rotate(-45)" text-anchor="end" font-size="9.3" fill="#666">May</text>
<text transform="translate(1047.9,506.6) rotate(-45)" text-anchor="end" font-size="9.3" fill="#666">Jun</text>
<text transform="translate(1090.3,506.6) rotate(-45)" text-anchor="end" font-size="9.3" fill="#666">Jul</text>
<text transform="translate(1132.7,506.6) rotate(-45)" text-anchor="end" font-size="9.3" fill="#666">Aug</text>
<text transform="translate(1175.0,506.6) rotate(-45)" text-anchor="end" font-size="9.3" fill="#666">Sep</text>
<text transform="translate(1217.4,506.6) rotate(-45)" text-anchor="end" font-size="9.3" fill="#666">Oct</text>
<text transform="translate(1259.8,506.6) rotate(-45)" text-anchor="end" font-size="9.3" fill="#666">Nov</text>
<text transform="translate(1302.1,506.6) rotate(-45)" text-anchor="end" font-size="9.3" fill="#666">Dec</text>
<text transform="translate(1344.5,506.6) rotate(-45)" text-anchor="end" font-size="9.3" fill="#666">Jan</text>
<text transform="translate(1386.9,506.6) rotate(-45)" text-anchor="end" font-size="9.3" fill="#666">Feb</text>
<text transform="translate(1429.2,506.6) rotate(-45)" text-anchor="end" font-size="9.3" fill="#666">Mar</text>
<text transform="translate(1471.6,506.6) rotate(-45)" text-anchor="end" font-size="9.3" fill="#666">Apr</text>
<text transform="translate(1513.9,506.6) rotate(-45)" text-anchor="end" font-size="9.3" fill="#666">May</text>
<text transform="translate(1556.3,506.6) rotate(-45)" text-anchor="end" font-size="9.3" fill="#666">Jun</text>
<text transform="translate(1598.7,506.6) rotate(-45)" text-anchor="end" font-size="9.3" fill="#666">Jul</text>
<text transform="translate(1641.0,506.6) rotate(-45)" text-anchor="end" font-size="9.3" fill="#666">Aug</text>
<text transform="translate(1683.4,506.6) rotate(-45)" text-anchor="end" font-size="9.3" fill="#666">Sep</text>
<text transform="translate(1725.8,506.6) rotate(-45)" text-anchor="end" font-size="9.3" fill="#666">Oct</text>
<text transform="translate(1768.1,506.6) rotate(-45)" text-anchor="end" font-size="9.3" fill="#666">Nov</text>
<text transform="translate(1810.5,506.6) rotate(-45)" text-anchor="end" font-size="9.3" fill="#666">Dec</text>
<text x="1239.5" y="549.7" text-anchor="middle" font-size="12" fill="#555">Period</text>
<polyline points="636.6,377.8 679.0,430.8 721.3,434.0 763.7,409.4 806.1,412.7 848.4,431.7 890.8,439.5 933.1,454.5 975.5,438.3 1017.9,426.5 1060.2,428.6 1102.6,361.5 1145.0,389.2 1187.3,423.2 1229.7,477.1 1272.1,472.9 1314.4,426.8" fill="none" stroke="#f00" stroke-width="2" stroke-linejoin="round"/><path d="M636.6 373.4 L641.0 377.8 L636.6 382.2 L632.2 377.8Z" fill="#f00" stroke="#fff" stroke-width="0.7"/><path d="M679.0 426.4 L683.4 430.8 L679.0 435.2 L674.6 430.8Z" fill="#f00" stroke="#fff" stroke-width="0.7"/><path d="M721.3 429.6 L725.7 434.0 L721.3 438.4 L716.9 434.0Z" fill="#f00" stroke="#fff" stroke-width="0.7"/><path d="M763.7 405.0 L768.1 409.4 L763.7 413.8 L759.3 409.4Z" fill="#f00" stroke="#fff" stroke-width="0.7"/><path d="M806.1 408.3 L810.5 412.7 L806.1 417.1 L801.7 412.7Z" fill="#f00" stroke="#fff" stroke-width="0.7"/><path d="M848.4 427.3 L852.8 431.7 L848.4 436.1 L844.0 431.7Z" fill="#f00" stroke="#fff" stroke-width="0.7"/><path d="M890.8 435.1 L895.2 439.5 L890.8 443.9 L886.4 439.5Z" fill="#f00" stroke="#fff" stroke-width="0.7"/><path d="M933.1 450.1 L937.5 454.5 L933.1 458.9 L928.7 454.5Z" fill="#f00" stroke="#fff" stroke-width="0.7"/><path d="M975.5 433.9 L979.9 438.3 L975.5 442.7 L971.1 438.3Z" fill="#f00" stroke="#fff" stroke-width="0.7"/><path d="M1017.9 422.1 L1022.3 426.5 L1017.9 430.9 L1013.5 426.5Z" fill="#f00" stroke="#fff" stroke-width="0.7"/><path d="M1060.2 424.2 L1064.6 428.6 L1060.2 433.0 L1055.8 428.6Z" fill="#f00" stroke="#fff" stroke-width="0.7"/><path d="M1102.6 357.1 L1107.0 361.5 L1102.6 365.9 L1098.2 361.5Z" fill="#f00" stroke="#fff" stroke-width="0.7"/><path d="M1145.0 384.8 L1149.4 389.2 L1145.0 393.6 L1140.6 389.2Z" fill="#f00" stroke="#fff" stroke-width="0.7"/><path d="M1187.3 418.8 L1191.7 423.2 L1187.3 427.6 L1182.9 423.2Z" fill="#f00" stroke="#fff" stroke-width="0.7"/><path d="M1229.7 472.7 L1234.1 477.1 L1229.7 481.5 L1225.3 477.1Z" fill="#f00" stroke="#fff" stroke-width="0.7"/><path d="M1272.1 468.5 L1276.5 472.9 L1272.1 477.3 L1267.7 472.9Z" fill="#f00" stroke="#fff" stroke-width="0.7"/><path d="M1314.4 422.4 L1318.8 426.8 L1314.4 431.2 L1310.0 426.8Z" fill="#f00" stroke="#fff" stroke-width="0.7"/>
<polyline points="1356.8,432.1 1399.2,422.8 1441.5,430.4 1483.9,426.6 1526.2,433.7 1568.6,427.7 1611.0,341.8 1653.3,333.1 1695.7,411.0 1738.1,419.2 1780.4,429.0 1822.8,420.0" fill="none" stroke="#434348" stroke-width="2" stroke-linejoin="round"/><path d="M1356.8 427.1 L1361.8 432.1 L1356.8 437.1 L1351.8 432.1Z" fill="#434348" stroke="#fff" stroke-width="0.7"/><path d="M1399.2 417.8 L1404.2 422.8 L1399.2 427.8 L1394.2 422.8Z" fill="#434348" stroke="#fff" stroke-width="0.7"/><path d="M1441.5 425.4 L1446.5 430.4 L1441.5 435.4 L1436.5 430.4Z" fill="#434348" stroke="#fff" stroke-width="0.7"/><path d="M1483.9 421.6 L1488.9 426.6 L1483.9 431.6 L1478.9 426.6Z" fill="#434348" stroke="#fff" stroke-width="0.7"/><path d="M1526.2 428.7 L1531.2 433.7 L1526.2 438.7 L1521.2 433.7Z" fill="#434348" stroke="#fff" stroke-width="0.7"/><path d="M1568.6 422.7 L1573.6 427.7 L1568.6 432.7 L1563.6 427.7Z" fill="#434348" stroke="#fff" stroke-width="0.7"/><path d="M1611.0 336.8 L1616.0 341.8 L1611.0 346.8 L1606.0 341.8Z" fill="#434348" stroke="#fff" stroke-width="0.7"/><path d="M1653.3 328.1 L1658.3 333.1 L1653.3 338.1 L1648.3 333.1Z" fill="#434348" stroke="#fff" stroke-width="0.7"/><path d="M1695.7 406.0 L1700.7 411.0 L1695.7 416.0 L1690.7 411.0Z" fill="#434348" stroke="#fff" stroke-width="0.7"/><path d="M1738.1 414.2 L1743.1 419.2 L1738.1 424.2 L1733.1 419.2Z" fill="#434348" stroke="#fff" stroke-width="0.7"/><path d="M1780.4 424.0 L1785.4 429.0 L1780.4 434.0 L1775.4 429.0Z" fill="#434348" stroke="#fff" stroke-width="0.7"/><path d="M1822.8 415.0 L1827.8 420.0 L1822.8 425.0 L1817.8 420.0Z" fill="#434348" stroke="#fff" stroke-width="0.7"/>
<polyline points="1356.8,469.5 1399.2,451.7 1441.5,457.2 1483.9,466.5 1526.2,466.0 1568.6,471.4 1611.0,397.9 1653.3,401.4 1695.7,421.1 1738.1,433.1 1780.4,438.6 1822.8,433.1" fill="none" stroke="#f7a35c" stroke-width="2" stroke-linejoin="round"/><path d="M1356.8 464.5 L1361.8 469.5 L1356.8 474.5 L1351.8 469.5Z" fill="#f7a35c" stroke="#fff" stroke-width="0.7"/><path d="M1399.2 446.7 L1404.2 451.7 L1399.2 456.7 L1394.2 451.7Z" fill="#f7a35c" stroke="#fff" stroke-width="0.7"/><path d="M1441.5 452.2 L1446.5 457.2 L1441.5 462.2 L1436.5 457.2Z" fill="#f7a35c" stroke="#fff" stroke-width="0.7"/><path d="M1483.9 461.5 L1488.9 466.5 L1483.9 471.5 L1478.9 466.5Z" fill="#f7a35c" stroke="#fff" stroke-width="0.7"/><path d="M1526.2 461.0 L1531.2 466.0 L1526.2 471.0 L1521.2 466.0Z" fill="#f7a35c" stroke="#fff" stroke-width="0.7"/><path d="M1568.6 466.4 L1573.6 471.4 L1568.6 476.4 L1563.6 471.4Z" fill="#f7a35c" stroke="#fff" stroke-width="0.7"/><path d="M1611.0 392.9 L1616.0 397.9 L1611.0 402.9 L1606.0 397.9Z" fill="#f7a35c" stroke="#fff" stroke-width="0.7"/><path d="M1653.3 396.4 L1658.3 401.4 L1653.3 406.4 L1648.3 401.4Z" fill="#f7a35c" stroke="#fff" stroke-width="0.7"/><path d="M1695.7 416.1 L1700.7 421.1 L1695.7 426.1 L1690.7 421.1Z" fill="#f7a35c" stroke="#fff" stroke-width="0.7"/><path d="M1738.1 428.1 L1743.1 433.1 L1738.1 438.1 L1733.1 433.1Z" fill="#f7a35c" stroke="#fff" stroke-width="0.7"/><path d="M1780.4 433.6 L1785.4 438.6 L1780.4 443.6 L1775.4 438.6Z" fill="#f7a35c" stroke="#fff" stroke-width="0.7"/><path d="M1822.8 428.1 L1827.8 433.1 L1822.8 438.1 L1817.8 433.1Z" fill="#f7a35c" stroke="#fff" stroke-width="0.7"/>
<polyline points="1356.8,443.5 1399.2,449.0 1441.5,449.3 1483.9,448.7 1526.2,449.3 1568.6,449.0 1611.0,371.9 1653.3,388.9 1695.7,444.1 1738.1,447.4 1780.4,445.2 1822.8,446.3" fill="none" stroke="#008000" stroke-width="2" stroke-linejoin="round"/><path d="M1356.8 439.7 L1360.6 443.5 L1356.8 447.3 L1353.0 443.5Z" fill="#008000" stroke="#fff" stroke-width="0.7"/><path d="M1399.2 445.2 L1403.0 449.0 L1399.2 452.8 L1395.4 449.0Z" fill="#008000" stroke="#fff" stroke-width="0.7"/><path d="M1441.5 445.5 L1445.3 449.3 L1441.5 453.1 L1437.7 449.3Z" fill="#008000" stroke="#fff" stroke-width="0.7"/><path d="M1483.9 444.9 L1487.7 448.7 L1483.9 452.5 L1480.1 448.7Z" fill="#008000" stroke="#fff" stroke-width="0.7"/><path d="M1526.2 445.5 L1530.0 449.3 L1526.2 453.1 L1522.4 449.3Z" fill="#008000" stroke="#fff" stroke-width="0.7"/><path d="M1568.6 445.2 L1572.4 449.0 L1568.6 452.8 L1564.8 449.0Z" fill="#008000" stroke="#fff" stroke-width="0.7"/><path d="M1611.0 368.1 L1614.8 371.9 L1611.0 375.7 L1607.2 371.9Z" fill="#008000" stroke="#fff" stroke-width="0.7"/><path d="M1653.3 385.1 L1657.1 388.9 L1653.3 392.7 L1649.5 388.9Z" fill="#008000" stroke="#fff" stroke-width="0.7"/><path d="M1695.7 440.3 L1699.5 444.1 L1695.7 447.9 L1691.9 444.1Z" fill="#008000" stroke="#fff" stroke-width="0.7"/><path d="M1738.1 443.6 L1741.9 447.4 L1738.1 451.2 L1734.3 447.4Z" fill="#008000" stroke="#fff" stroke-width="0.7"/><path d="M1780.4 441.4 L1784.2 445.2 L1780.4 449.0 L1776.6 445.2Z" fill="#008000" stroke="#fff" stroke-width="0.7"/><path d="M1822.8 442.5 L1826.6 446.3 L1822.8 450.1 L1819.0 446.3Z" fill="#008000" stroke="#fff" stroke-width="0.7"/>
<rect x="1750.5" y="288.5" width="84" height="34" rx="2" fill="#f7f7f7" stroke="#cccccc"/>
<text x="1758.5" y="308" font-size="12.5" fill="#333" textLength="67" lengthAdjust="spacingAndGlyphs">Reset zoom</text>
<path d="M648.0 581.7 H665.5" stroke="#f00" stroke-width="2"/><path d="M656.7 577.7 L660.7 581.7 L656.7 585.7 L652.7 581.7Z" fill="#f00"/><text x="670.7" y="585.8" font-size="12.5" font-weight="bold" fill="#333" textLength="146.3" lengthAdjust="spacingAndGlyphs">History 2782(T) 1432(H)</text>
<path d="M836.9 581.7 H854.4" stroke="#008000" stroke-width="2"/><path d="M845.6 577.7 L849.6 581.7 L845.6 585.7 L841.6 581.7Z" fill="#008000"/><text x="859.6" y="585.8" font-size="12.5" font-weight="bold" fill="#333" textLength="102.2" lengthAdjust="spacingAndGlyphs">Forecast 1169(H)</text>
<path d="M982.2 581.7 H999.7" stroke="#ccc" stroke-width="2"/><path d="M990.9 577.7 L994.9 581.7 L990.9 585.7 L986.9 581.7Z" fill="#ccc"/><text x="1004.9" y="585.8" font-size="12.5" font-weight="bold" fill="#ccc" textLength="238.0" lengthAdjust="spacingAndGlyphs">History_Sales Forecast 2782(T) 1093(H)</text>
<path d="M1261.5 581.7 H1279.0" stroke="#434348" stroke-width="2"/><path d="M1270.2 577.7 L1274.2 581.7 L1270.2 585.7 L1266.2 581.7Z" fill="#434348"/><text x="1284.2" y="585.8" font-size="12.5" font-weight="bold" fill="#333" textLength="194.0" lengthAdjust="spacingAndGlyphs">Forecast_Sales Forecast 1748(H)</text>
<path d="M1498.0 581.7 H1515.5" stroke="#ccc" stroke-width="2"/><path d="M1506.7 577.7 L1510.7 581.7 L1506.7 585.7 L1502.7 581.7Z" fill="#ccc"/><text x="1520.7" y="585.8" font-size="12.5" font-weight="bold" fill="#ccc" textLength="249.5" lengthAdjust="spacingAndGlyphs">History_Budget Forecast 2782(T) 1093(H)</text>
<path d="M648.0 600.0 H665.5" stroke="#f7a35c" stroke-width="2"/><path d="M656.7 596.0 L660.7 600.0 L656.7 604.0 L652.7 600.0Z" fill="#f7a35c"/><text x="670.7" y="604.1" font-size="12.5" font-weight="bold" fill="#333" textLength="205.0" lengthAdjust="spacingAndGlyphs">Forecast_Budget Forecast 1026(H)</text>
</svg>
<!-- table -->
<div class="a" style="left:589px;top:642px;width:20px;height:20px;border:2px solid #555;border-radius:1px"></div>
<div class="a" style="left:619px;top:646px;font-size:13px;color:#444">Show Prediction Interval</div>
<div class="a" style="left:770px;top:642px;width:20px;height:20px;border:2px solid #555;border-radius:1px"></div>
<div class="a" style="left:800px;top:646px;font-size:13px;color:#444">Adjust</div>
<div class="a" style="left:577px;top:676px;width:1281px;height:294px;background:#fff;box-shadow:0 1px 3px rgba(0,0,0,.22);border-radius:2px"></div>
<div class="a" style="left:601px;top:688px;font-size:12px;font-weight:bold;color:#333">Detailed Demands</div>
<svg class="a" style="left:1819px;top:691px" width="10" height="7"><path d="M1 1 L4.8 4.6 L8.6 1" fill="none" stroke="#222" stroke-width="1.1"/></svg>
<div class="a" style="left:577px;top:710px;width:1281px;height:1px;background:#e3e3e3"></div>
<div class="a" style="left:616px;top:730px;font-size:11px;color:#999;letter-spacing:0px">HISTORY</div>
<div class="a" style="left:697px;top:730px;font-size:11px;color:#2196f3">FORECAST</div>
<div class="a" style="left:601px;top:756px;width:1237px;height:1px;background:#e0e0e0"></div>
<div class="a" style="left:682px;top:755px;width:89px;height:3px;background:#2196f3"></div>
<div class="a" style="left:613px;top:768px;width:1224px;height:137px;overflow:hidden">
<div class="a" style="left:0;top:0;width:1400px;height:28px;background:#f5f5f5"></div>
<div class="a" style="left:0;top:0px;width:1400px;height:1px;background:#d2d2d2"></div>
<div class="a" style="left:0;top:27px;width:1400px;height:1px;background:#d2d2d2"></div>
<div class="a" style="left:0;top:54px;width:1400px;height:1px;background:#d2d2d2"></div>
<div class="a" style="left:0;top:81px;width:1400px;height:1px;background:#d2d2d2"></div>
<div class="a" style="left:0;top:108px;width:1400px;height:1px;background:#d2d2d2"></div>
<div class="a" style="left:0;top:135px;width:1400px;height:1px;background:#d2d2d2"></div>
<div class="a" style="left:0px;top:0;width:1px;height:136px;background:#d2d2d2"></div>
<div class="a" style="left:175px;top:0;width:1px;height:136px;background:#d2d2d2"></div>
<div class="a" style="left:245px;top:0;width:1px;height:136px;background:#d2d2d2"></div>
<div class="a" style="left:315px;top:0;width:1px;height:136px;background:#d2d2d2"></div>
<div class="a" style="left:420px;top:0;width:1px;height:136px;background:#d2d2d2"></div>
<div class="a" style="left:525px;top:0;width:1px;height:136px;background:#d2d2d2"></div>
<div class="a" style="left:630px;top:0;width:1px;height:136px;background:#d2d2d2"></div>
<div class="a" style="left:734px;top:0;width:1px;height:136px;background:#d2d2d2"></div>
<div class="a" style="left:839px;top:0;width:1px;height:136px;background:#d2d2d2"></div>
<div class="a" style="left:943px;top:0;width:1px;height:136px;background:#d2d2d2"></div>
<div class="a" style="left:1048px;top:0;width:1px;height:136px;background:#d2d2d2"></div>
<div class="a" style="left:1153px;top:0;width:1px;height:136px;background:#d2d2d2"></div>
<div class="a" style="left:1258px;top:0;width:1px;height:136px;background:#d2d2d2"></div>
<div class="a" style="left:87.5px;top:6px;width:100px;margin-left:-50px;text-align:center;font-size:12px;color:#555;margin-top:1px">Series</div>
<div class="a" style="left:197.3px;top:6px;width:100px;margin-left:-50px;text-align:center;font-size:12px;color:#555;margin-top:1px">Nov</div>
<div class="a" style="left:267.2px;top:6px;width:100px;margin-left:-50px;text-align:center;font-size:12px;color:#555;margin-top:1px">Dec</div>
<div class="a" style="left:355.0px;top:6px;width:100px;margin-left:-50px;text-align:center;font-size:12px;color:#555;margin-top:1px">Jan</div>
<div class="a" style="left:459.7px;top:6px;width:100px;margin-left:-50px;text-align:center;font-size:12px;color:#555;margin-top:1px">Feb</div>
<div class="a" style="left:564.5px;top:6px;width:100px;margin-left:-50px;text-align:center;font-size:12px;color:#555;margin-top:1px">Mar</div>
<div class="a" style="left:669.5px;top:6px;width:100px;margin-left:-50px;text-align:center;font-size:12px;color:#555;margin-top:1px">Apr</div>
<div class="a" style="left:774.0px;top:6px;width:100px;margin-left:-50px;text-align:center;font-size:12px;color:#555;margin-top:1px">May</div>
<div class="a" style="left:878.0px;top:6px;width:100px;margin-left:-50px;text-align:center;font-size:12px;color:#555;margin-top:1px">Jun</div>
<div class="a" style="left:983.0px;top:6px;width:100px;margin-left:-50px;text-align:center;font-size:12px;color:#555;margin-top:1px">Jul</div>
<div class="a" style="left:1087.8px;top:6px;width:100px;margin-left:-50px;text-align:center;font-size:12px;color:#555;margin-top:1px">Aug</div>
<div class="a" style="left:1192.8px;top:6px;width:100px;margin-left:-50px;text-align:center;font-size:12px;color:#555;margin-top:1px">Sep</div>
<div class="a" style="left:18.5px;top:34.0px;font-size:12px;color:#222">Sales Forecast</div>
<svg class="a" style="left:114.8px;top:35.8px" width="11" height="10" viewBox="0 0 11 10"><path d="M5.5 0 V8.3 M1.3 4.6 L5.5 8.6 L9.7 4.6" fill="none" stroke="#000" stroke-width="2.4"/></svg>
<svg class="a" style="left:140.0px;top:35.3px" width="14" height="12" viewBox="0 0 14 12"><path d="M0.6 8.5 V3 L3 0.6 H7.5 V3" fill="none" stroke="#333" stroke-width="1"/><path d="M0.6 3 H3 V0.6" fill="none" stroke="#333" stroke-width="0.9"/><path d="M5.5 11.4 V5 L7.8 2.7 H12.4 V11.4Z" fill="#fff" stroke="#333" stroke-width="1"/><path d="M5.5 5 H7.8 V2.7" fill="none" stroke="#333" stroke-width="0.9"/></svg>
<div class="a" style="left:193.7px;top:34.0px;font-size:12px;color:#222">NA</div>
<div class="a" style="left:263.9px;top:34.0px;font-size:12px;color:#222">NA</div>
<div class="a" style="left:333.8px;top:34.0px;font-size:12px;color:#222">105</div>
<svg class="a" style="left:369.8px;top:35.8px" width="11" height="10" viewBox="0 0 11 10"><path d="M5.5 0 V8.3 M1.3 4.6 L5.5 8.6 L9.7 4.6" fill="none" stroke="#000" stroke-width="2.4"/></svg>
<svg class="a" style="left:395.1px;top:35.8px" width="12" height="11" viewBox="0 0 12 11"><path d="M1.1 7.1 L7.6 0.6 C8 0.2 8.4 0.2 8.8 0.6 L10.4 2.2 C10.8 2.6 10.8 3 10.4 3.4 L3.9 9.9Z" fill="#2a9130"/><path d="M1.1 7.1 L3.9 9.9 L0.4 10.7Z" fill="#bfe3c0" stroke="#d4a040" stroke-width="0.5"/><path d="M2.5 8.5 L8.2 2.8" stroke="#7cc47f" stroke-width="0.6"/><path d="M7 1.2 L9.8 4" stroke="#1f6e24" stroke-width="0.7"/></svg>
<div class="a" style="left:438.7px;top:34.0px;font-size:12px;color:#222">123</div>
<svg class="a" style="left:474.7px;top:35.8px" width="11" height="10" viewBox="0 0 11 10"><path d="M5.5 0 V8.3 M1.3 4.6 L5.5 8.6 L9.7 4.6" fill="none" stroke="#000" stroke-width="2.4"/></svg>
<svg class="a" style="left:500.0px;top:35.8px" width="12" height="11" viewBox="0 0 12 11"><path d="M1.1 7.1 L7.6 0.6 C8 0.2 8.4 0.2 8.8 0.6 L10.4 2.2 C10.8 2.6 10.8 3 10.4 3.4 L3.9 9.9Z" fill="#2a9130"/><path d="M1.1 7.1 L3.9 9.9 L0.4 10.7Z" fill="#bfe3c0" stroke="#d4a040" stroke-width="0.5"/><path d="M2.5 8.5 L8.2 2.8" stroke="#7cc47f" stroke-width="0.6"/><path d="M7 1.2 L9.8 4" stroke="#1f6e24" stroke-width="0.7"/></svg>
<div class="a" style="left:543.5px;top:34.0px;font-size:12px;color:#222">108</div>
<svg class="a" style="left:579.5px;top:35.8px" width="11" height="10" viewBox="0 0 11 10"><path d="M5.5 0 V8.3 M1.3 4.6 L5.5 8.6 L9.7 4.6" fill="none" stroke="#000" stroke-width="2.4"/></svg>
<svg class="a" style="left:604.8px;top:35.8px" width="12" height="11" viewBox="0 0 12 11"><path d="M1.1 7.1 L7.6 0.6 C8 0.2 8.4 0.2 8.8 0.6 L10.4 2.2 C10.8 2.6 10.8 3 10.4 3.4 L3.9 9.9Z" fill="#2a9130"/><path d="M1.1 7.1 L3.9 9.9 L0.4 10.7Z" fill="#bfe3c0" stroke="#d4a040" stroke-width="0.5"/><path d="M2.5 8.5 L8.2 2.8" stroke="#7cc47f" stroke-width="0.6"/><path d="M7 1.2 L9.8 4" stroke="#1f6e24" stroke-width="0.7"/></svg>
<div class="a" style="left:648.5px;top:34.0px;font-size:12px;color:#222">115</div>
<svg class="a" style="left:683.6px;top:35.8px" width="11" height="10" viewBox="0 0 11 10"><path d="M5.5 0 V8.3 M1.3 4.6 L5.5 8.6 L9.7 4.6" fill="none" stroke="#000" stroke-width="2.4"/></svg>
<svg class="a" style="left:708.9px;top:35.8px" width="12" height="11" viewBox="0 0 12 11"><path d="M1.1 7.1 L7.6 0.6 C8 0.2 8.4 0.2 8.8 0.6 L10.4 2.2 C10.8 2.6 10.8 3 10.4 3.4 L3.9 9.9Z" fill="#2a9130"/><path d="M1.1 7.1 L3.9 9.9 L0.4 10.7Z" fill="#bfe3c0" stroke="#d4a040" stroke-width="0.5"/><path d="M2.5 8.5 L8.2 2.8" stroke="#7cc47f" stroke-width="0.6"/><path d="M7 1.2 L9.8 4" stroke="#1f6e24" stroke-width="0.7"/></svg>
<div class="a" style="left:753.0px;top:34.0px;font-size:12px;color:#222">102</div>
<svg class="a" style="left:789.0px;top:35.8px" width="11" height="10" viewBox="0 0 11 10"><path d="M5.5 0 V8.3 M1.3 4.6 L5.5 8.6 L9.7 4.6" fill="none" stroke="#000" stroke-width="2.4"/></svg>
<svg class="a" style="left:814.3px;top:35.8px" width="12" height="11" viewBox="0 0 12 11"><path d="M1.1 7.1 L7.6 0.6 C8 0.2 8.4 0.2 8.8 0.6 L10.4 2.2 C10.8 2.6 10.8 3 10.4 3.4 L3.9 9.9Z" fill="#2a9130"/><path d="M1.1 7.1 L3.9 9.9 L0.4 10.7Z" fill="#bfe3c0" stroke="#d4a040" stroke-width="0.5"/><path d="M2.5 8.5 L8.2 2.8" stroke="#7cc47f" stroke-width="0.6"/><path d="M7 1.2 L9.8 4" stroke="#1f6e24" stroke-width="0.7"/></svg>
<div class="a" style="left:857.8px;top:34.0px;font-size:12px;color:#222">113</div>
<svg class="a" style="left:892.9px;top:35.8px" width="11" height="10" viewBox="0 0 11 10"><path d="M5.5 0 V8.3 M1.3 4.6 L5.5 8.6 L9.7 4.6" fill="none" stroke="#000" stroke-width="2.4"/></svg>
<svg class="a" style="left:918.2px;top:35.8px" width="12" height="11" viewBox="0 0 12 11"><path d="M1.1 7.1 L7.6 0.6 C8 0.2 8.4 0.2 8.8 0.6 L10.4 2.2 C10.8 2.6 10.8 3 10.4 3.4 L3.9 9.9Z" fill="#2a9130"/><path d="M1.1 7.1 L3.9 9.9 L0.4 10.7Z" fill="#bfe3c0" stroke="#d4a040" stroke-width="0.5"/><path d="M2.5 8.5 L8.2 2.8" stroke="#7cc47f" stroke-width="0.6"/><path d="M7 1.2 L9.8 4" stroke="#1f6e24" stroke-width="0.7"/></svg>
<div class="a" style="left:961.7px;top:34.0px;font-size:12px;color:#222">277</div>
<svg class="a" style="left:997.7px;top:35.8px" width="11" height="10" viewBox="0 0 11 10"><path d="M5.5 0 V8.3 M1.3 4.6 L5.5 8.6 L9.7 4.6" fill="none" stroke="#000" stroke-width="2.4"/></svg>
<svg class="a" style="left:1023.0px;top:35.8px" width="12" height="11" viewBox="0 0 12 11"><path d="M1.1 7.1 L7.6 0.6 C8 0.2 8.4 0.2 8.8 0.6 L10.4 2.2 C10.8 2.6 10.8 3 10.4 3.4 L3.9 9.9Z" fill="#2a9130"/><path d="M1.1 7.1 L3.9 9.9 L0.4 10.7Z" fill="#bfe3c0" stroke="#d4a040" stroke-width="0.5"/><path d="M2.5 8.5 L8.2 2.8" stroke="#7cc47f" stroke-width="0.6"/><path d="M7 1.2 L9.8 4" stroke="#1f6e24" stroke-width="0.7"/></svg>
<div class="a" style="left:1066.8px;top:34.0px;font-size:12px;color:#222">294</div>
<svg class="a" style="left:1102.8px;top:35.8px" width="11" height="10" viewBox="0 0 11 10"><path d="M5.5 0 V8.3 M1.3 4.6 L5.5 8.6 L9.7 4.6" fill="none" stroke="#000" stroke-width="2.4"/></svg>
<svg class="a" style="left:1128.1px;top:35.8px" width="12" height="11" viewBox="0 0 12 11"><path d="M1.1 7.1 L7.6 0.6 C8 0.2 8.4 0.2 8.8 0.6 L10.4 2.2 C10.8 2.6 10.8 3 10.4 3.4 L3.9 9.9Z" fill="#2a9130"/><path d="M1.1 7.1 L3.9 9.9 L0.4 10.7Z" fill="#bfe3c0" stroke="#d4a040" stroke-width="0.5"/><path d="M2.5 8.5 L8.2 2.8" stroke="#7cc47f" stroke-width="0.6"/><path d="M7 1.2 L9.8 4" stroke="#1f6e24" stroke-width="0.7"/></svg>
<div class="a" style="left:1171.8px;top:34.0px;font-size:12px;color:#222">145</div>
<svg class="a" style="left:1207.8px;top:35.8px" width="11" height="10" viewBox="0 0 11 10"><path d="M5.5 0 V8.3 M1.3 4.6 L5.5 8.6 L9.7 4.6" fill="none" stroke="#000" stroke-width="2.4"/></svg>
<svg class="a" style="left:1233.1px;top:35.8px" width="12" height="11" viewBox="0 0 12 11"><path d="M1.1 7.1 L7.6 0.6 C8 0.2 8.4 0.2 8.8 0.6 L10.4 2.2 C10.8 2.6 10.8 3 10.4 3.4 L3.9 9.9Z" fill="#2a9130"/><path d="M1.1 7.1 L3.9 9.9 L0.4 10.7Z" fill="#bfe3c0" stroke="#d4a040" stroke-width="0.5"/><path d="M2.5 8.5 L8.2 2.8" stroke="#7cc47f" stroke-width="0.6"/><path d="M7 1.2 L9.8 4" stroke="#1f6e24" stroke-width="0.7"/></svg>
<div class="a" style="left:18.5px;top:61.0px;font-size:12px;color:#222">Budget Forecast</div>
<svg class="a" style="left:122.8px;top:62.8px" width="11" height="10" viewBox="0 0 11 10"><path d="M5.5 0 V8.3 M1.3 4.6 L5.5 8.6 L9.7 4.6" fill="none" stroke="#000" stroke-width="2.4"/></svg>
<svg class="a" style="left:148.0px;top:62.3px" width="14" height="12" viewBox="0 0 14 12"><path d="M0.6 8.5 V3 L3 0.6 H7.5 V3" fill="none" stroke="#333" stroke-width="1"/><path d="M0.6 3 H3 V0.6" fill="none" stroke="#333" stroke-width="0.9"/><path d="M5.5 11.4 V5 L7.8 2.7 H12.4 V11.4Z" fill="#fff" stroke="#333" stroke-width="1"/><path d="M5.5 5 H7.8 V2.7" fill="none" stroke="#333" stroke-width="0.9"/></svg>
<div class="a" style="left:193.7px;top:61.0px;font-size:12px;color:#222">NA</div>
<div class="a" style="left:263.9px;top:61.0px;font-size:12px;color:#222">NA</div>
<div class="a" style="left:333.8px;top:61.0px;font-size:12px;color:#222">33</div>
<svg class="a" style="left:363.1px;top:62.8px" width="11" height="10" viewBox="0 0 11 10"><path d="M5.5 0 V8.3 M1.3 4.6 L5.5 8.6 L9.7 4.6" fill="none" stroke="#000" stroke-width="2.4"/></svg>
<svg class="a" style="left:388.4px;top:62.8px" width="12" height="11" viewBox="0 0 12 11"><path d="M1.1 7.1 L7.6 0.6 C8 0.2 8.4 0.2 8.8 0.6 L10.4 2.2 C10.8 2.6 10.8 3 10.4 3.4 L3.9 9.9Z" fill="#2a9130"/><path d="M1.1 7.1 L3.9 9.9 L0.4 10.7Z" fill="#bfe3c0" stroke="#d4a040" stroke-width="0.5"/><path d="M2.5 8.5 L8.2 2.8" stroke="#7cc47f" stroke-width="0.6"/><path d="M7 1.2 L9.8 4" stroke="#1f6e24" stroke-width="0.7"/></svg>
<div class="a" style="left:438.7px;top:61.0px;font-size:12px;color:#222">68</div>
<svg class="a" style="left:468.0px;top:62.8px" width="11" height="10" viewBox="0 0 11 10"><path d="M5.5 0 V8.3 M1.3 4.6 L5.5 8.6 L9.7 4.6" fill="none" stroke="#000" stroke-width="2.4"/></svg>
<svg class="a" style="left:493.3px;top:62.8px" width="12" height="11" viewBox="0 0 12 11"><path d="M1.1 7.1 L7.6 0.6 C8 0.2 8.4 0.2 8.8 0.6 L10.4 2.2 C10.8 2.6 10.8 3 10.4 3.4 L3.9 9.9Z" fill="#2a9130"/><path d="M1.1 7.1 L3.9 9.9 L0.4 10.7Z" fill="#bfe3c0" stroke="#d4a040" stroke-width="0.5"/><path d="M2.5 8.5 L8.2 2.8" stroke="#7cc47f" stroke-width="0.6"/><path d="M7 1.2 L9.8 4" stroke="#1f6e24" stroke-width="0.7"/></svg>
<div class="a" style="left:543.5px;top:61.0px;font-size:12px;color:#222">57</div>
<svg class="a" style="left:572.8px;top:62.8px" width="11" height="10" viewBox="0 0 11 10"><path d="M5.5 0 V8.3 M1.3 4.6 L5.5 8.6 L9.7 4.6" fill="none" stroke="#000" stroke-width="2.4"/></svg>
<svg class="a" style="left:598.1px;top:62.8px" width="12" height="11" viewBox="0 0 12 11"><path d="M1.1 7.1 L7.6 0.6 C8 0.2 8.4 0.2 8.8 0.6 L10.4 2.2 C10.8 2.6 10.8 3 10.4 3.4 L3.9 9.9Z" fill="#2a9130"/><path d="M1.1 7.1 L3.9 9.9 L0.4 10.7Z" fill="#bfe3c0" stroke="#d4a040" stroke-width="0.5"/><path d="M2.5 8.5 L8.2 2.8" stroke="#7cc47f" stroke-width="0.6"/><path d="M7 1.2 L9.8 4" stroke="#1f6e24" stroke-width="0.7"/></svg>
<div class="a" style="left:648.5px;top:61.0px;font-size:12px;color:#222">39</div>
<svg class="a" style="left:677.8px;top:62.8px" width="11" height="10" viewBox="0 0 11 10"><path d="M5.5 0 V8.3 M1.3 4.6 L5.5 8.6 L9.7 4.6" fill="none" stroke="#000" stroke-width="2.4"/></svg>
<svg class="a" style="left:703.1px;top:62.8px" width="12" height="11" viewBox="0 0 12 11"><path d="M1.1 7.1 L7.6 0.6 C8 0.2 8.4 0.2 8.8 0.6 L10.4 2.2 C10.8 2.6 10.8 3 10.4 3.4 L3.9 9.9Z" fill="#2a9130"/><path d="M1.1 7.1 L3.9 9.9 L0.4 10.7Z" fill="#bfe3c0" stroke="#d4a040" stroke-width="0.5"/><path d="M2.5 8.5 L8.2 2.8" stroke="#7cc47f" stroke-width="0.6"/><path d="M7 1.2 L9.8 4" stroke="#1f6e24" stroke-width="0.7"/></svg>
<div class="a" style="left:753.0px;top:61.0px;font-size:12px;color:#222">40</div>
<svg class="a" style="left:782.3px;top:62.8px" width="11" height="10" viewBox="0 0 11 10"><path d="M5.5 0 V8.3 M1.3 4.6 L5.5 8.6 L9.7 4.6" fill="none" stroke="#000" stroke-width="2.4"/></svg>
<svg class="a" style="left:807.6px;top:62.8px" width="12" height="11" viewBox="0 0 12 11"><path d="M1.1 7.1 L7.6 0.6 C8 0.2 8.4 0.2 8.8 0.6 L10.4 2.2 C10.8 2.6 10.8 3 10.4 3.4 L3.9 9.9Z" fill="#2a9130"/><path d="M1.1 7.1 L3.9 9.9 L0.4 10.7Z" fill="#bfe3c0" stroke="#d4a040" stroke-width="0.5"/><path d="M2.5 8.5 L8.2 2.8" stroke="#7cc47f" stroke-width="0.6"/><path d="M7 1.2 L9.8 4" stroke="#1f6e24" stroke-width="0.7"/></svg>
<div class="a" style="left:857.8px;top:61.0px;font-size:12px;color:#222">30</div>
<svg class="a" style="left:887.1px;top:62.8px" width="11" height="10" viewBox="0 0 11 10"><path d="M5.5 0 V8.3 M1.3 4.6 L5.5 8.6 L9.7 4.6" fill="none" stroke="#000" stroke-width="2.4"/></svg>
<svg class="a" style="left:912.4px;top:62.8px" width="12" height="11" viewBox="0 0 12 11"><path d="M1.1 7.1 L7.6 0.6 C8 0.2 8.4 0.2 8.8 0.6 L10.4 2.2 C10.8 2.6 10.8 3 10.4 3.4 L3.9 9.9Z" fill="#2a9130"/><path d="M1.1 7.1 L3.9 9.9 L0.4 10.7Z" fill="#bfe3c0" stroke="#d4a040" stroke-width="0.5"/><path d="M2.5 8.5 L8.2 2.8" stroke="#7cc47f" stroke-width="0.6"/><path d="M7 1.2 L9.8 4" stroke="#1f6e24" stroke-width="0.7"/></svg>
<div class="a" style="left:961.7px;top:61.0px;font-size:12px;color:#222">170</div>
<svg class="a" style="left:997.7px;top:62.8px" width="11" height="10" viewBox="0 0 11 10"><path d="M5.5 0 V8.3 M1.3 4.6 L5.5 8.6 L9.7 4.6" fill="none" stroke="#000" stroke-width="2.4"/></svg>
<svg class="a" style="left:1023.0px;top:62.8px" width="12" height="11" viewBox="0 0 12 11"><path d="M1.1 7.1 L7.6 0.6 C8 0.2 8.4 0.2 8.8 0.6 L10.4 2.2 C10.8 2.6 10.8 3 10.4 3.4 L3.9 9.9Z" fill="#2a9130"/><path d="M1.1 7.1 L3.9 9.9 L0.4 10.7Z" fill="#bfe3c0" stroke="#d4a040" stroke-width="0.5"/><path d="M2.5 8.5 L8.2 2.8" stroke="#7cc47f" stroke-width="0.6"/><path d="M7 1.2 L9.8 4" stroke="#1f6e24" stroke-width="0.7"/></svg>
<div class="a" style="left:1066.8px;top:61.0px;font-size:12px;color:#222">164</div>
<svg class="a" style="left:1102.8px;top:62.8px" width="11" height="10" viewBox="0 0 11 10"><path d="M5.5 0 V8.3 M1.3 4.6 L5.5 8.6 L9.7 4.6" fill="none" stroke="#000" stroke-width="2.4"/></svg>
<svg class="a" style="left:1128.1px;top:62.8px" width="12" height="11" viewBox="0 0 12 11"><path d="M1.1 7.1 L7.6 0.6 C8 0.2 8.4 0.2 8.8 0.6 L10.4 2.2 C10.8 2.6 10.8 3 10.4 3.4 L3.9 9.9Z" fill="#2a9130"/><path d="M1.1 7.1 L3.9 9.9 L0.4 10.7Z" fill="#bfe3c0" stroke="#d4a040" stroke-width="0.5"/><path d="M2.5 8.5 L8.2 2.8" stroke="#7cc47f" stroke-width="0.6"/><path d="M7 1.2 L9.8 4" stroke="#1f6e24" stroke-width="0.7"/></svg>
<div class="a" style="left:1171.8px;top:61.0px;font-size:12px;color:#222">126</div>
<svg class="a" style="left:1207.8px;top:62.8px" width="11" height="10" viewBox="0 0 11 10"><path d="M5.5 0 V8.3 M1.3 4.6 L5.5 8.6 L9.7 4.6" fill="none" stroke="#000" stroke-width="2.4"/></svg>
<svg class="a" style="left:1233.1px;top:62.8px" width="12" height="11" viewBox="0 0 12 11"><path d="M1.1 7.1 L7.6 0.6 C8 0.2 8.4 0.2 8.8 0.6 L10.4 2.2 C10.8 2.6 10.8 3 10.4 3.4 L3.9 9.9Z" fill="#2a9130"/><path d="M1.1 7.1 L3.9 9.9 L0.4 10.7Z" fill="#bfe3c0" stroke="#d4a040" stroke-width="0.5"/><path d="M2.5 8.5 L8.2 2.8" stroke="#7cc47f" stroke-width="0.6"/><path d="M7 1.2 L9.8 4" stroke="#1f6e24" stroke-width="0.7"/></svg>
<div class="a" style="left:18.5px;top:88.0px;font-size:12px;color:#222">Current</div>
<svg class="a" style="left:74.3px;top:90.8px" width="9" height="9" viewBox="0 0 9 9"><path d="M1.2 1.2 L7.8 7.8 M7.8 1.2 L1.2 7.8" stroke="#f02828" stroke-width="2.2"/></svg>
<svg class="a" style="left:98.5px;top:89.3px" width="10" height="11" viewBox="0 0 10 11"><path d="M0.5 1.8 H9.5 M3.5 1.8 V0.6 H6.5 V1.8" fill="none" stroke="#f0506e" stroke-width="1"/><path d="M1.5 2.3 L2 10.3 H8 L8.5 2.3" fill="none" stroke="#f04060" stroke-width="1.1"/><path d="M3.8 4 V8.6 M5 4 V8.6 M6.2 4 V8.6" stroke="#e040a0" stroke-width="0.8"/></svg>
<div class="a" style="left:193.7px;top:88.0px;font-size:12px;color:#222">NA</div>
<div class="a" style="left:263.9px;top:88.0px;font-size:12px;color:#222">NA</div>
<div class="a" style="left:333.8px;top:88.0px;font-size:12px;color:#222">83</div>
<div class="a" style="left:438.7px;top:88.0px;font-size:12px;color:#222">73</div>
<div class="a" style="left:543.5px;top:88.0px;font-size:12px;color:#222">72</div>
<div class="a" style="left:648.5px;top:88.0px;font-size:12px;color:#222">73</div>
<div class="a" style="left:753.0px;top:88.0px;font-size:12px;color:#222">72</div>
<div class="a" style="left:857.8px;top:88.0px;font-size:12px;color:#222">73</div>
<div class="a" style="left:961.7px;top:88.0px;font-size:12px;color:#222">220</div>
<div class="a" style="left:1066.8px;top:88.0px;font-size:12px;color:#222">187</div>
<div class="a" style="left:1171.8px;top:88.0px;font-size:12px;color:#222">82</div>
<div class="a" style="left:18.5px;top:115.0px;font-size:12px;color:#222">Original</div>
<div class="a" style="left:193.7px;top:115.0px;font-size:12px;color:#222">NA</div>
<div class="a" style="left:263.9px;top:115.0px;font-size:12px;color:#222">NA</div>
<div class="a" style="left:333.8px;top:115.0px;font-size:12px;color:#222">83</div>
<div class="a" style="left:438.7px;top:115.0px;font-size:12px;color:#222">73</div>
<div class="a" style="left:543.5px;top:115.0px;font-size:12px;color:#222">72</div>
<div class="a" style="left:648.5px;top:115.0px;font-size:12px;color:#222">73</div>
<div class="a" style="left:753.0px;top:115.0px;font-size:12px;color:#222">72</div>
<div class="a" style="left:857.8px;top:115.0px;font-size:12px;color:#222">73</div>
<div class="a" style="left:961.7px;top:115.0px;font-size:12px;color:#222">220</div>
<div class="a" style="left:1066.8px;top:115.0px;font-size:12px;color:#222">187</div>
<div class="a" style="left:1171.8px;top:115.0px;font-size:12px;color:#222">82</div>
</div>
<div class="a" style="left:601px;top:928px;width:1236px;height:16px;background:#f1f1f1"></div>
<div class="a" style="left:618px;top:930px;width:939px;height:12px;background:#c1c1c1"></div>
<svg class="a" style="left:606px;top:932px" width="6" height="8"><path d="M5 0 L1 4 L5 8Z" fill="#a3a3a3"/></svg>
<svg class="a" style="left:1827px;top:932px" width="6" height="8"><path d="M1 0 L5 4 L1 8Z" fill="#505050"/></svg>
<!-- /table -->
<div class="a" style="left:88px;top:124px;width:1786px;height:39px;background:#fff;box-shadow:0 2px 3px rgba(0,0,0,.16)"></div>
<div class="a" style="left:1857px;top:124px;width:17px;height:39px;background:#f0f0f0"></div>
<svg class="a" style="left:1861px;top:131px" width="9" height="6"><path d="M0.5 5.5 L4.5 1 L8.5 5.5Z" fill="#a0a0a0"/></svg>
<div class="a" style="left:1859px;top:142px;width:13px;height:4px;background:#bdbdbd"></div>
<svg class="a" style="left:1861px;top:151px" width="9" height="6"><path d="M0.5 0.5 L4.5 5 L8.5 0.5Z" fill="#555"/></svg>
<!-- tabs -->
<div class="tabs a">
  <div class="tab" style="left:0;width:96px">History</div>
  <div class="tab" style="left:96px;width:180px">Forecast Parameters</div>
  <div class="tab" style="left:276px;width:105px">Forecast</div>
  <div class="tab" style="left:381px;width:154px">Forecast Metrics</div>
  <div class="tab" style="left:535px;width:133px">Audit Metrics</div>
  <div class="tab act" style="left:668px;width:144px">Graphical View</div>
  <div class="tab" style="left:812px;width:112px">Attributes</div>
  <div class="tab" style="left:924px;width:168px">Forecast Vs Actual</div>
  <div class="tab" style="left:1092px;width:198px">Timeseries Comparison</div>
</div>

</body></html>
